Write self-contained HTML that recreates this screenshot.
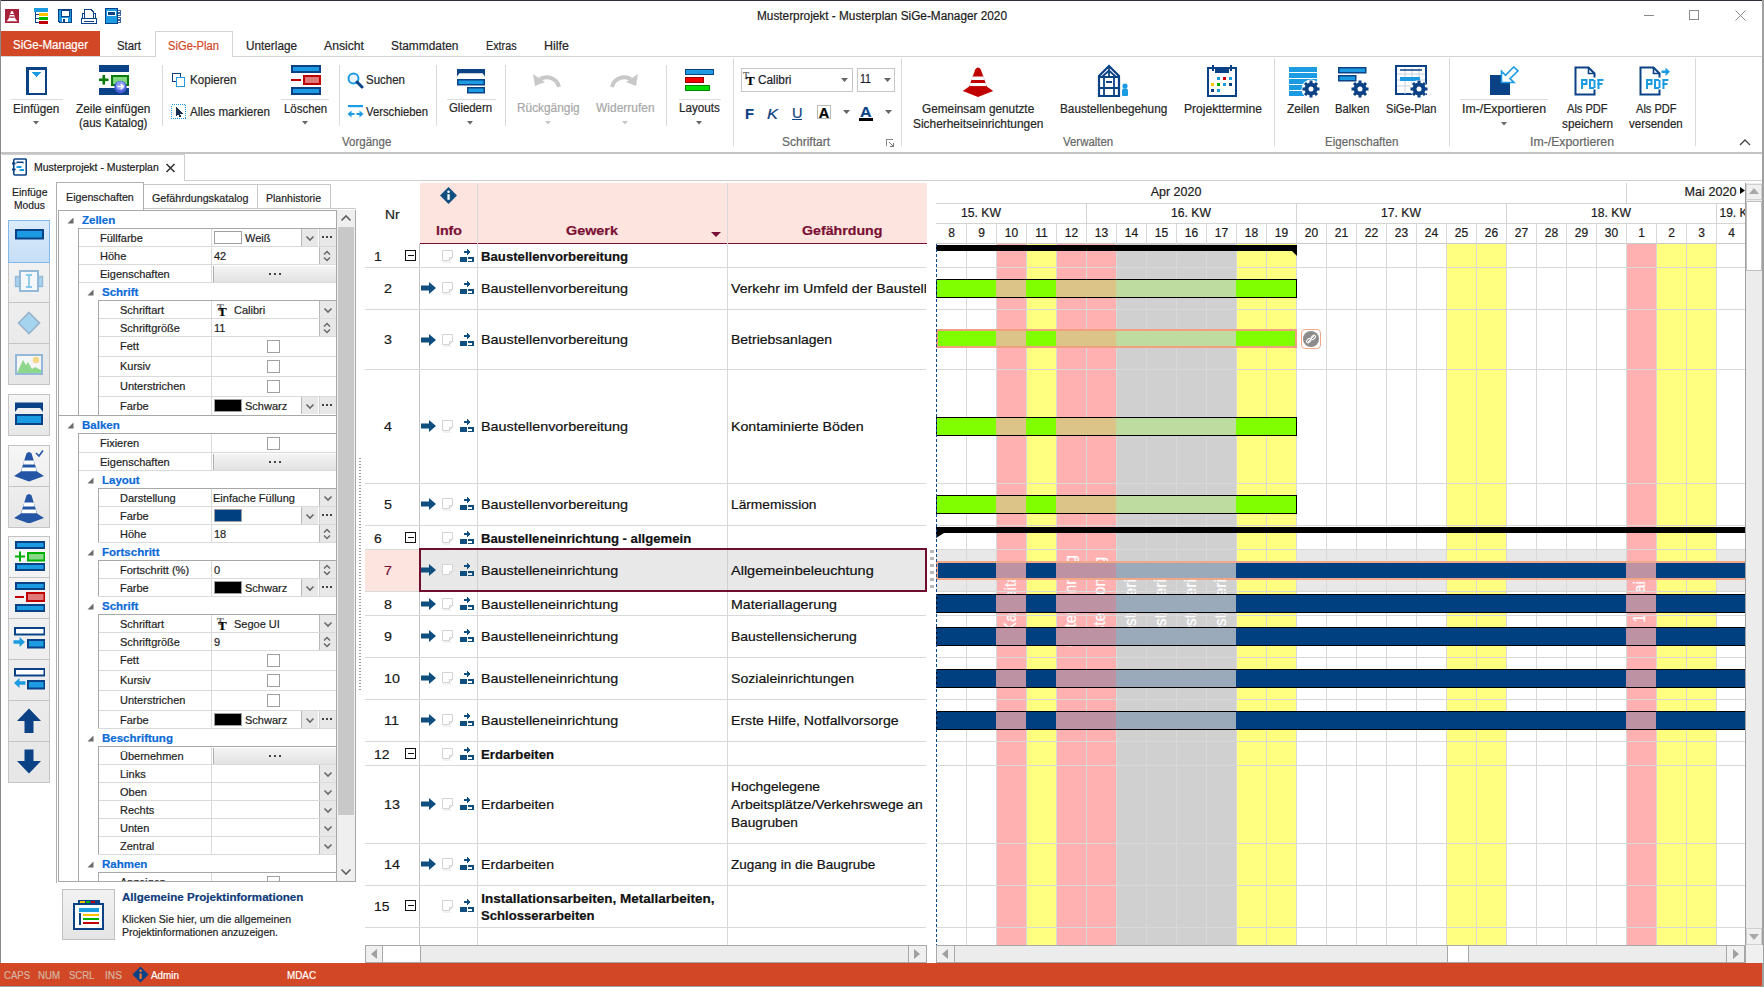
<!DOCTYPE html>
<html><head><meta charset="utf-8"><title>SiGe-Manager</title>
<style>
html,body{margin:0;padding:0;width:1764px;height:987px;overflow:hidden;background:#fff;}
body{position:relative;font-family:"Liberation Sans",sans-serif;}
.t{position:absolute;white-space:nowrap;-webkit-text-stroke:0.2px currentColor;}
.r{position:absolute;box-sizing:border-box;}
</style></head><body>
<div class="r" style="left:0px;top:0px;width:1764px;height:1px;background:#2b2f3a;"></div>
<div class="r" style="left:0px;top:0px;width:1px;height:987px;background:#8a8a8a;"></div>
<div class="r" style="left:1763px;top:0px;width:1px;height:987px;background:#8a8a8a;"></div>
<div class="t" style="left:757.00px;top:10.14px;font-size:12px;line-height:12px;color:#1a1a1a;transform:scaleX(0.9838);transform-origin:0 0;">Musterprojekt - Musterplan SiGe-Manager 2020</div>
<div class="r" style="left:1644px;top:15px;width:10px;height:1px;background:#8a8a8a;"></div>
<div class="r" style="left:1689px;top:10px;width:10px;height:10px;box-shadow:inset 0 0 0 1px #8a8a8a;"></div>
<svg class="r" style="left:1734.5px;top:9.5px" width="11" height="11" viewBox="0 0 11 11"><path d="M0.5 0.5 L10.5 10.5 M10.5 0.5 L0.5 10.5" stroke="#8a8a8a" stroke-width="1"/></svg>
<div class="r" style="left:1px;top:31px;width:99px;height:26px;background:#d24726;"></div>
<div class="t" style="left:12.50px;top:38.64px;font-size:12px;line-height:12px;color:#ffffff;transform:scaleX(0.9611);transform-origin:0 0;">SiGe-Manager</div>
<div class="r" style="left:1px;top:56px;width:1762px;height:1px;background:#d4d4d4;"></div>
<div class="r" style="left:155px;top:31px;width:78px;height:26px;background:#ffffff;border:1px solid #d4d4d4;border-bottom:none;"></div>
<div class="t" style="left:168.00px;top:40.34px;font-size:12px;line-height:12px;color:#d24726;transform:scaleX(0.9325);transform-origin:0 0;">SiGe-Plan</div>
<div class="t" style="left:117.00px;top:40.34px;font-size:12px;line-height:12px;color:#262626;transform:scaleX(0.9470);transform-origin:0 0;">Start</div>
<div class="t" style="left:246.00px;top:40.34px;font-size:12px;line-height:12px;color:#262626;transform:scaleX(0.9802);transform-origin:0 0;">Unterlage</div>
<div class="t" style="left:324.00px;top:40.34px;font-size:12px;line-height:12px;color:#262626;transform:scaleX(1.0165);transform-origin:0 0;">Ansicht</div>
<div class="t" style="left:391.00px;top:40.34px;font-size:12px;line-height:12px;color:#262626;transform:scaleX(0.9921);transform-origin:0 0;">Stammdaten</div>
<div class="t" style="left:486.00px;top:40.34px;font-size:12px;line-height:12px;color:#262626;transform:scaleX(0.8998);transform-origin:0 0;">Extras</div>
<div class="t" style="left:544.00px;top:40.34px;font-size:12px;line-height:12px;color:#262626;transform:scaleX(1.0415);transform-origin:0 0;">Hilfe</div>
<div class="r" style="left:1px;top:152px;width:1762px;height:2px;background:#c4c4c4;"></div>
<div class="r" style="left:733px;top:58px;width:1px;height:88px;background:#dadada;"></div>
<div class="r" style="left:901px;top:58px;width:1px;height:88px;background:#dadada;"></div>
<div class="r" style="left:1274px;top:58px;width:1px;height:88px;background:#dadada;"></div>
<div class="r" style="left:1449px;top:58px;width:1px;height:88px;background:#dadada;"></div>
<div class="r" style="left:1695px;top:58px;width:1px;height:88px;background:#dadada;"></div>
<div class="r" style="left:162px;top:65px;width:1px;height:61px;background:#dadada;"></div>
<div class="r" style="left:339px;top:65px;width:1px;height:61px;background:#dadada;"></div>
<div class="r" style="left:436px;top:65px;width:1px;height:61px;background:#dadada;"></div>
<div class="r" style="left:505px;top:65px;width:1px;height:61px;background:#dadada;"></div>
<div class="r" style="left:666px;top:65px;width:1px;height:61px;background:#dadada;"></div>
<div class="t" style="left:341.70px;top:135.84px;font-size:12px;line-height:12px;color:#666666;transform:scaleX(0.9595);transform-origin:0 0;">Vorgänge</div>
<div class="t" style="left:782.00px;top:136.34px;font-size:12px;line-height:12px;color:#666666;">Schriftart</div>
<div class="t" style="left:1062.50px;top:136.34px;font-size:12px;line-height:12px;color:#666666;transform:scaleX(0.9526);transform-origin:0 0;">Verwalten</div>
<div class="t" style="left:1325.40px;top:136.34px;font-size:12px;line-height:12px;color:#666666;transform:scaleX(0.9651);transform-origin:0 0;">Eigenschaften</div>
<div class="t" style="left:1529.90px;top:136.34px;font-size:12px;line-height:12px;color:#666666;transform:scaleX(1.0240);transform-origin:0 0;">Im-/Exportieren</div>
<svg class="r" style="left:1738px;top:137px" width="14" height="10" viewBox="0 0 14 10"><path d="M2 8 L7 3 L12 8" fill="none" stroke="#444" stroke-width="1.3"/></svg>
<div class="r" style="left:184px;top:180px;width:1579px;height:1px;background:#cfcfcf;"></div>
<div class="r" style="left:2px;top:154px;width:183px;height:27px;background:#ffffff;border:1px solid #cfcfcf;border-bottom:none;border-left:none;"></div>
<div class="t" style="left:33.60px;top:162.49px;font-size:11px;line-height:11px;color:#1a1a1a;transform:scaleX(0.9533);transform-origin:0 0;">Musterprojekt - Musterplan</div>
<svg class="r" style="left:165px;top:163px" width="11" height="10" viewBox="0 0 11 10"><path d="M1.5 1 L9.5 9 M9.5 1 L1.5 9" stroke="#333" stroke-width="1.6"/></svg>
<div class="r" style="left:0px;top:963px;width:1764px;height:24px;background:#d24726;"></div>
<div class="r" style="left:0px;top:986px;width:1764px;height:1px;background:#a0a2a2;"></div>
<div class="t" style="left:4.00px;top:969.99px;font-size:11px;line-height:11px;color:#d2b6a2;transform:scaleX(0.8679);transform-origin:0 0;">CAPS</div>
<div class="t" style="left:38.00px;top:969.99px;font-size:11px;line-height:11px;color:#d2b6a2;transform:scaleX(0.8782);transform-origin:0 0;">NUM</div>
<div class="t" style="left:69.00px;top:969.99px;font-size:11px;line-height:11px;color:#d2b6a2;transform:scaleX(0.8656);transform-origin:0 0;">SCRL</div>
<div class="t" style="left:105.00px;top:969.99px;font-size:11px;line-height:11px;color:#d2b6a2;transform:scaleX(0.9271);transform-origin:0 0;">INS</div>
<div class="t" style="left:151.00px;top:969.99px;font-size:11px;line-height:11px;color:#ffffff;transform:scaleX(0.8981);transform-origin:0 0;">Admin</div>
<div class="t" style="left:287.00px;top:969.99px;font-size:11px;line-height:11px;color:#ffffff;transform:scaleX(0.8954);transform-origin:0 0;">MDAC</div>
<svg class="r" style="left:11px;top:158px" width="16" height="18" viewBox="0 0 16 18"><rect x="2.75" y="1" width="12.5" height="16" rx="1.2" fill="#fff" stroke="#0b4285" stroke-width="1.6"/><rect x="1" y="4.5" width="3.5" height="2" fill="#0b4285"/><rect x="1" y="10.5" width="3.5" height="2" fill="#0b4285"/><path d="M5.5 3.5 H12.5 V6 L11.5 5 H6.5 L5.5 6 Z" fill="#0b4285"/><rect x="5.5" y="8" width="5" height="2" fill="#1d9be2"/><rect x="8.5" y="11" width="4.5" height="2" fill="#1d9be2"/></svg>
<svg class="r" style="left:132px;top:966px" width="17" height="17" viewBox="0 0 17 17"><path d="M8.5 0.5 L16.5 8.5 L8.5 16.5 L0.5 8.5 Z" fill="#0b4285"/><rect x="7.5" y="7.5" width="2.2" height="5.5" fill="#ee7a3a"/><circle cx="8.6" cy="4.8" r="1.3" fill="#ee7a3a"/></svg>
<svg class="r" style="left:5px;top:9px" width="14" height="14" viewBox="0 0 14 14"><rect width="14" height="14" fill="#a8213a"/><path d="M6 2.6 Q7 1.4 8 2.6 L10.6 10.2 H3.4 Z" fill="#fff"/><path d="M5.3 5 H8.7 L9 6 H5 Z M4.6 7.6 H9.4 L9.8 8.8 H4.2 Z" fill="#a8213a"/><path d="M1.5 12.2 L3.6 10 H10.4 L12.5 12.2 Z" fill="#fff"/></svg>
<svg class="r" style="left:34px;top:8px" width="15" height="17" viewBox="0 0 15 17" shape-rendering="crispEdges"><rect x="0" y="0" width="14" height="4" fill="#1d9be2"/><rect x="1" y="4" width="1" height="11" fill="#0b4285"/><rect x="1" y="6" width="4" height="1" fill="#0b4285"/><rect x="1" y="10" width="4" height="1" fill="#0b4285"/><rect x="1" y="14" width="4" height="1" fill="#0b4285"/><rect x="5" y="5" width="9" height="3" fill="#ffc000"/><rect x="5" y="9" width="9" height="3" fill="#00b800"/><rect x="5" y="13" width="9" height="3" fill="#c00000"/></svg>
<svg class="r" style="left:58px;top:9px" width="14" height="14" viewBox="0 0 14 14" shape-rendering="crispEdges"><path d="M0.5 0.5 H13.5 V13.5 H2 L0.5 12 Z" fill="#1d9be2" stroke="#0b4285" stroke-width="1"/><rect x="3" y="1" width="8" height="6" fill="#fff" stroke="#0b4285" stroke-width="1"/><rect x="4" y="9" width="6" height="4" fill="#fff"/><rect x="5" y="10" width="2" height="3" fill="#0b4285"/></svg>
<svg class="r" style="left:81px;top:9px" width="16" height="15" viewBox="0 0 16 15" shape-rendering="crispEdges"><path d="M3.5 14 V4.5 H1.5 V9.5 M12.5 4.5 H14.5 V9.5" fill="none" stroke="#0b4285"/><path d="M3.5 9 V0.5 H10 L12.5 3 V9" fill="#fff" stroke="#0b4285"/><rect x="0.5" y="9.5" width="15" height="5" fill="#fff" stroke="#0b4285"/><rect x="3" y="12" width="10" height="1" fill="#0b4285"/></svg>
<svg class="r" style="left:105px;top:8px" width="16" height="16" viewBox="0 0 16 16" shape-rendering="crispEdges"><rect x="0.5" y="0.5" width="12" height="15" fill="#1d9be2" stroke="#0b4285"/><rect x="12.5" y="2" width="2.5" height="2" fill="#fff" stroke="#0b4285" stroke-width="0.8"/><rect x="12.5" y="5.5" width="2.5" height="2" fill="#fff" stroke="#0b4285" stroke-width="0.8"/><rect x="12.5" y="9" width="2.5" height="2" fill="#fff" stroke="#0b4285" stroke-width="0.8"/><rect x="12.5" y="12.5" width="2.5" height="2" fill="#fff" stroke="#0b4285" stroke-width="0.8"/><rect x="2" y="3" width="9" height="5" fill="#fff"/><rect x="3" y="4" width="7" height="3" fill="#0b4285"/></svg>
<svg class="r" style="left:26px;top:67px" width="21" height="28" viewBox="0 0 21 28" shape-rendering="crispEdges"><rect x="1.25" y="1.25" width="18.5" height="25.5" fill="#fff" stroke="#0b4285" stroke-width="2.5"/><path d="M5.5 5 H15.5 L10.5 10 Z" fill="#1d9be2"/></svg>
<div class="r" style="left:11px;top:99px;width:52px;height:1px;background:#dcdcdc;"></div>
<div class="t" style="left:13.20px;top:102.54px;font-size:12px;line-height:12px;color:#262626;transform:scaleX(0.9753);transform-origin:0 0;">Einfügen</div>
<svg class="r" style="left:33px;top:120.5px" width="6" height="4" viewBox="0 0 6 4"><path d="M0 0 H6 L3 3.5 Z" fill="#666"/></svg>
<svg class="r" style="left:99px;top:65px" width="31" height="31" viewBox="0 0 31 31"><rect x="0" y="0" width="30" height="7" fill="#0b4285"/><rect x="0" y="23" width="30" height="7" fill="#0b4285"/><rect x="0" y="13.5" width="9.5" height="2.6" fill="#0a7a0a"/><rect x="3.5" y="10" width="2.6" height="9.6" fill="#0a7a0a"/><rect x="13" y="11" width="16" height="9" fill="#7fd67f" stroke="#0a7a0a" stroke-width="2"/><circle cx="21.5" cy="22" r="6.2" fill="#4a5ed8"/><circle cx="21.5" cy="20.8" r="4.6" fill="#8a9cf8"/><path d="M18.5 21.5 H24 M21.8 19 L24.3 21.5 L21.8 24" fill="none" stroke="#fff" stroke-width="1.5"/></svg>
<div class="t" style="left:76.00px;top:102.54px;font-size:12px;line-height:12px;color:#262626;transform:scaleX(0.9870);transform-origin:0 0;">Zeile einfügen</div>
<div class="t" style="left:79.30px;top:117.04px;font-size:12px;line-height:12px;color:#262626;transform:scaleX(0.9583);transform-origin:0 0;">(aus Katalog)</div>
<svg class="r" style="left:172px;top:73px" width="14" height="14" viewBox="0 0 14 14" shape-rendering="crispEdges"><rect x="0.5" y="0.5" width="8" height="8" fill="#fff" stroke="#0b4285"/><rect x="4.5" y="4.5" width="8" height="9" fill="#fff" stroke="#1d9be2"/></svg>
<div class="t" style="left:190.00px;top:73.84px;font-size:12px;line-height:12px;color:#262626;transform:scaleX(0.9681);transform-origin:0 0;">Kopieren</div>
<svg class="r" style="left:171px;top:104px" width="16" height="16" viewBox="0 0 16 16" shape-rendering="crispEdges"><rect x="0.5" y="0.5" width="14" height="14" fill="none" stroke="#1d9be2" stroke-dasharray="1 1"/><path d="M5 3 L5 12 L7 10 L9 13.5 L10.5 12.8 L8.7 9.5 L11.5 9.5 Z" fill="#1a3050"/></svg>
<div class="t" style="left:190.00px;top:105.84px;font-size:12px;line-height:12px;color:#262626;transform:scaleX(0.9674);transform-origin:0 0;">Alles markieren</div>
<svg class="r" style="left:291px;top:65px" width="31" height="30" viewBox="0 0 31 30" shape-rendering="crispEdges"><rect x="1" y="1" width="28" height="6" fill="#1d9be2" stroke="#0b4285" stroke-width="2"/><rect x="1" y="23" width="28" height="6" fill="#1d9be2" stroke="#0b4285" stroke-width="2"/><rect x="13" y="11" width="16" height="8" fill="#e07b7b" stroke="#c00000" stroke-width="2"/><rect x="0" y="14" width="10" height="2" fill="#c00000"/></svg>
<div class="r" style="left:281px;top:99px;width:48px;height:1px;background:#dcdcdc;"></div>
<div class="t" style="left:283.50px;top:102.64px;font-size:12px;line-height:12px;color:#262626;transform:scaleX(0.9522);transform-origin:0 0;">Löschen</div>
<svg class="r" style="left:302px;top:120.5px" width="6" height="4" viewBox="0 0 6 4"><path d="M0 0 H6 L3 3.5 Z" fill="#666"/></svg>
<svg class="r" style="left:347px;top:72px" width="17" height="17" viewBox="0 0 17 17"><circle cx="6.5" cy="6.5" r="5" fill="#eaf4fc" stroke="#1d9be2" stroke-width="2"/><path d="M10 10 L15 15" stroke="#0b4285" stroke-width="3" stroke-linecap="round"/></svg>
<div class="t" style="left:366.00px;top:73.84px;font-size:12px;line-height:12px;color:#262626;transform:scaleX(0.9583);transform-origin:0 0;">Suchen</div>
<svg class="r" style="left:347px;top:104px" width="17" height="15" viewBox="0 0 17 15"><rect x="1" y="1" width="15" height="2.2" fill="#1d9be2"/><path d="M0.5 10 L4.5 6.5 V13.5 Z M16.5 10 L12.5 6.5 V13.5 Z" fill="#1d9be2"/><rect x="4" y="9" width="3.5" height="2" fill="#1d9be2"/><rect x="9.5" y="9" width="3.5" height="2" fill="#1d9be2"/></svg>
<div class="t" style="left:366.00px;top:105.84px;font-size:12px;line-height:12px;color:#262626;transform:scaleX(0.9387);transform-origin:0 0;">Verschieben</div>
<svg class="r" style="left:457px;top:69px" width="29" height="25" viewBox="0 0 29 25"><path d="M0 0 H28 V7.5 L25.5 4.2 H2.5 L0 7.5 Z" fill="#0b4285"/><rect x="0.75" y="10.75" width="26.5" height="5" fill="#1d9be2" stroke="#0b4285" stroke-width="1.5"/><rect x="10.75" y="18.75" width="16.5" height="5" fill="#1d9be2" stroke="#0b4285" stroke-width="1.5"/></svg>
<div class="r" style="left:447px;top:99px;width:49px;height:1px;background:#dcdcdc;"></div>
<div class="t" style="left:449.45px;top:102.44px;font-size:12px;line-height:12px;color:#262626;transform:scaleX(0.9503);transform-origin:0 0;">Gliedern</div>
<svg class="r" style="left:467px;top:120.5px" width="6" height="4" viewBox="0 0 6 4"><path d="M0 0 H6 L3 3.5 Z" fill="#666"/></svg>
<svg class="r" style="left:531px;top:72px" width="31" height="16" viewBox="0 0 31 16"><path d="M28 15 C26 6 16 3 9 7" fill="none" stroke="#c8c8c8" stroke-width="4"/><path d="M2 2 L4 14 L14 10 Z" fill="#c8c8c8"/></svg>
<div class="t" style="left:517.00px;top:102.44px;font-size:12px;line-height:12px;color:#a8a8a8;transform:scaleX(0.9878);transform-origin:0 0;">Rückgängig</div>
<svg class="r" style="left:545px;top:120.5px" width="6" height="4" viewBox="0 0 6 4"><path d="M0 0 H6 L3 3.5 Z" fill="#c8c8c8"/></svg>
<svg class="r" style="left:609px;top:72px" width="31" height="16" viewBox="0 0 31 16"><path d="M3 15 C5 6 15 3 22 7" fill="none" stroke="#c8c8c8" stroke-width="4"/><path d="M29 2 L27 14 L17 10 Z" fill="#c8c8c8"/></svg>
<div class="t" style="left:596.00px;top:102.44px;font-size:12px;line-height:12px;color:#a8a8a8;">Widerrufen</div>
<svg class="r" style="left:622px;top:120.5px" width="6" height="4" viewBox="0 0 6 4"><path d="M0 0 H6 L3 3.5 Z" fill="#c8c8c8"/></svg>
<svg class="r" style="left:685px;top:69px" width="29" height="23" viewBox="0 0 29 23" shape-rendering="crispEdges"><rect x="0.5" y="0.5" width="27.5" height="5" fill="#1d9be2" stroke="#0b4285"/><rect x="0.5" y="8.5" width="17.5" height="5" fill="#f00000" stroke="#900"/><rect x="0.5" y="16.5" width="23.5" height="5" fill="#00e000" stroke="#080"/></svg>
<div class="r" style="left:679px;top:99px;width:42px;height:1px;background:#dcdcdc;"></div>
<div class="t" style="left:679.10px;top:102.44px;font-size:12px;line-height:12px;color:#262626;transform:scaleX(0.9708);transform-origin:0 0;">Layouts</div>
<svg class="r" style="left:696px;top:120.5px" width="6" height="4" viewBox="0 0 6 4"><path d="M0 0 H6 L3 3.5 Z" fill="#666"/></svg>
<div class="r" style="left:741px;top:68px;width:112px;height:24px;background:#fff;box-shadow:inset 0 0 0 1px #c6c6c6;"></div>
<div class="r" style="left:857px;top:68px;width:38px;height:24px;background:#fff;box-shadow:inset 0 0 0 1px #c6c6c6;"></div>
<div class="t" style="left:743px;top:71px;font-family:'Liberation Serif',serif;font-size:10px;line-height:10px;color:#555;">T</div>
<div class="t" style="left:746px;top:74px;font-family:'Liberation Serif',serif;font-size:13px;line-height:13px;font-weight:bold;color:#000;">T</div>
<div class="t" style="left:758.00px;top:73.84px;font-size:12px;line-height:12px;color:#1a1a2a;transform:scaleX(0.9851);transform-origin:0 0;">Calibri</div>
<div class="t" style="left:860.00px;top:73.34px;font-size:12px;line-height:12px;color:#1a1a2a;transform:scaleX(0.8831);transform-origin:0 0;">11</div>
<svg class="r" style="left:841px;top:78px" width="8" height="4" viewBox="0 0 8 4"><path d="M0 0 H7 L3.5 4 Z" fill="#666"/></svg>
<svg class="r" style="left:884px;top:78px" width="8" height="4" viewBox="0 0 8 4"><path d="M0 0 H7 L3.5 4 Z" fill="#666"/></svg>
<div class="t" style="left:744.50px;top:105.58px;font-size:15.5px;line-height:15.5px;color:#0b4285;font-weight:bold;transform:scaleX(0.9505);transform-origin:0 0;">F</div>
<div class="t" style="left:766.50px;top:105.58px;font-size:15.5px;line-height:15.5px;color:#0b4285;font-style:italic;transform:scaleX(1.0639);transform-origin:0 0;">K</div>
<div class="t" style="left:791.50px;top:104.80px;font-size:15px;line-height:15px;color:#0b4285;transform:scaleX(0.9693);transform-origin:0 0;">U</div>
<div class="r" style="left:792px;top:119px;width:10px;height:1px;background:#0b4285;"></div>
<div class="r" style="left:817px;top:105px;width:14px;height:14px;background:#fff;box-shadow:inset 0 0 0 1px #bbbbbb;"></div>
<div class="t" style="left:818.80px;top:105.73px;font-size:14.5px;line-height:14.5px;color:#000;font-weight:bold;">A</div>
<svg class="r" style="left:843px;top:110px" width="8" height="4" viewBox="0 0 8 4"><path d="M0 0 H7 L3.5 4 Z" fill="#666"/></svg>
<div class="t" style="left:860.00px;top:104.73px;font-size:14.5px;line-height:14.5px;color:#0b4285;font-weight:bold;transform:scaleX(1.0982);transform-origin:0 0;">A</div>
<div class="r" style="left:859px;top:118px;width:14px;height:2.5px;background:#000;"></div>
<svg class="r" style="left:885px;top:110px" width="8" height="4" viewBox="0 0 8 4"><path d="M0 0 H7 L3.5 4 Z" fill="#666"/></svg>
<svg class="r" style="left:886px;top:139px" width="8" height="8" viewBox="0 0 8 8" shape-rendering="crispEdges"><path d="M0.5 7 V0.5 H7" fill="none" stroke="#888"/><path d="M3 3 L7 7 M7 4 V7 H4" fill="none" stroke="#777"/></svg>
<svg class="r" style="left:962px;top:66px" width="32" height="32" viewBox="0 0 32 32"><path d="M13.2 3.5 Q16 -0.5 18.8 3.5 L25 21 H7 Z" fill="#c00000"/><path d="M10.6 10.5 H21.4 L22.6 14 H9.4 Z M8.4 17 H23.6 L24.7 20.3 H7.3 Z" fill="#fff"/><path d="M0.8 25 L7.5 20.3 H24.5 L31.2 25 L16 31 Z" fill="#c00000"/></svg>
<div class="t" style="left:921.90px;top:103.14px;font-size:12px;line-height:12px;color:#262626;transform:scaleX(0.9837);transform-origin:0 0;">Gemeinsam genutzte</div>
<div class="t" style="left:913.30px;top:118.14px;font-size:12px;line-height:12px;color:#262626;transform:scaleX(0.9923);transform-origin:0 0;">Sicherheitseinrichtungen</div>
<svg class="r" style="left:1097px;top:64px" width="34" height="33" viewBox="0 0 34 33"><path d="M2 32 V12 L12 2 L22 12 V32 Z" fill="none" stroke="#0b4285" stroke-width="2.2"/><path d="M2 13 H22 M2 24 H22 M7 13 V32 M17 13 V32 M12 3 V13 M5 13 L12 6.5 L19 13 M9 18 H15" fill="none" stroke="#0b4285" stroke-width="1.8"/><circle cx="28" cy="22" r="2.6" fill="#1d9be2"/><path d="M25.2 25.5 Q28 23 30.8 25.5 V32 H25.2 Z" fill="#1d9be2"/><rect x="25" y="25" width="6" height="7" rx="2.5" fill="#1d9be2"/></svg>
<div class="t" style="left:1060.40px;top:103.14px;font-size:12px;line-height:12px;color:#262626;transform:scaleX(0.9797);transform-origin:0 0;">Baustellenbegehung</div>
<svg class="r" style="left:1206px;top:64px" width="32" height="33" viewBox="0 0 32 33" shape-rendering="crispEdges"><rect x="2" y="4" width="28" height="28" fill="#fff" stroke="#0b4285" stroke-width="2"/><rect x="9" y="3" width="14" height="6" fill="#0b4285"/><rect x="6" y="1" width="2" height="6" fill="#0b4285"/><rect x="24" y="1" width="2" height="6" fill="#0b4285"/><rect x="11" y="13" width="3" height="3" fill="#1d9be2"/><rect x="17" y="13" width="3" height="3" fill="#d00000"/><rect x="23" y="13" width="3" height="3" fill="#1d9be2"/><rect x="5" y="19" width="3" height="3" fill="#ffc000"/><rect x="11" y="19" width="3" height="3" fill="#00b000"/><rect x="17" y="19" width="3" height="3" fill="#1d9be2"/><rect x="23" y="19" width="3" height="3" fill="#0b4285"/><rect x="5" y="25" width="3" height="3" fill="#0b4285"/><rect x="11" y="25" width="3" height="3" fill="#1d9be2"/></svg>
<div class="t" style="left:1184.00px;top:103.14px;font-size:12px;line-height:12px;color:#262626;transform:scaleX(1.0082);transform-origin:0 0;">Projekttermine</div>
<svg class="r" style="left:1289px;top:67px" width="32" height="32" viewBox="0 0 32 32"><rect x="0" y="0" width="28" height="5" fill="#1d9be2"/><rect x="0" y="6" width="28" height="5" fill="#1d9be2"/><rect x="0" y="12" width="28" height="5" fill="#1d9be2"/><rect x="0" y="18" width="28" height="5" fill="#1d9be2"/><rect x="0" y="24" width="28" height="5" fill="#1d9be2"/><circle cx="22" cy="22" r="9.5" fill="#fff"/><circle cx="22" cy="22" r="6.5" fill="#0b4285"/><rect x="20.5" y="13.5" width="3" height="4" fill="#0b4285" transform="rotate(0 22 22)"/><rect x="20.5" y="13.5" width="3" height="4" fill="#0b4285" transform="rotate(45 22 22)"/><rect x="20.5" y="13.5" width="3" height="4" fill="#0b4285" transform="rotate(90 22 22)"/><rect x="20.5" y="13.5" width="3" height="4" fill="#0b4285" transform="rotate(135 22 22)"/><rect x="20.5" y="13.5" width="3" height="4" fill="#0b4285" transform="rotate(180 22 22)"/><rect x="20.5" y="13.5" width="3" height="4" fill="#0b4285" transform="rotate(225 22 22)"/><rect x="20.5" y="13.5" width="3" height="4" fill="#0b4285" transform="rotate(270 22 22)"/><rect x="20.5" y="13.5" width="3" height="4" fill="#0b4285" transform="rotate(315 22 22)"/><circle cx="22" cy="22" r="2.5" fill="#fff"/></svg>
<div class="t" style="left:1286.90px;top:103.14px;font-size:12px;line-height:12px;color:#262626;transform:scaleX(0.9853);transform-origin:0 0;">Zeilen</div>
<svg class="r" style="left:1338px;top:67px" width="32" height="32" viewBox="0 0 32 32"><rect x="0.75" y="0.75" width="27" height="5" fill="#1d9be2" stroke="#0b4285" stroke-width="1.5"/><rect x="0.75" y="8.75" width="17" height="5" fill="#1d9be2" stroke="#0b4285" stroke-width="1.5"/><circle cx="22" cy="22" r="6.5" fill="#0b4285"/><rect x="20.5" y="13.5" width="3" height="4" fill="#0b4285" transform="rotate(0 22 22)"/><rect x="20.5" y="13.5" width="3" height="4" fill="#0b4285" transform="rotate(45 22 22)"/><rect x="20.5" y="13.5" width="3" height="4" fill="#0b4285" transform="rotate(90 22 22)"/><rect x="20.5" y="13.5" width="3" height="4" fill="#0b4285" transform="rotate(135 22 22)"/><rect x="20.5" y="13.5" width="3" height="4" fill="#0b4285" transform="rotate(180 22 22)"/><rect x="20.5" y="13.5" width="3" height="4" fill="#0b4285" transform="rotate(225 22 22)"/><rect x="20.5" y="13.5" width="3" height="4" fill="#0b4285" transform="rotate(270 22 22)"/><rect x="20.5" y="13.5" width="3" height="4" fill="#0b4285" transform="rotate(315 22 22)"/><circle cx="22" cy="22" r="2.5" fill="#fff"/></svg>
<div class="t" style="left:1335.00px;top:103.14px;font-size:12px;line-height:12px;color:#262626;transform:scaleX(0.9376);transform-origin:0 0;">Balken</div>
<svg class="r" style="left:1395px;top:65px" width="33" height="33" viewBox="0 0 33 33"><rect x="1" y="1" width="30" height="28" fill="#fff" stroke="#0b4285" stroke-width="2"/><path d="M2 9 H30 M2 15 H30 M2 21 H30 M10 3 V29 M17 3 V29 M24 3 V29" stroke="#c8d0e0" stroke-width="1"/><path d="M5 5 H27" stroke="#0b4285" stroke-width="1.5"/><rect x="5" y="12" width="20" height="4" fill="#1d9be2"/><circle cx="24" cy="24" r="9" fill="#fff"/><circle cx="24" cy="24" r="6.5" fill="#0b4285"/><rect x="22.5" y="15.5" width="3" height="4" fill="#0b4285" transform="rotate(0 24 24)"/><rect x="22.5" y="15.5" width="3" height="4" fill="#0b4285" transform="rotate(45 24 24)"/><rect x="22.5" y="15.5" width="3" height="4" fill="#0b4285" transform="rotate(90 24 24)"/><rect x="22.5" y="15.5" width="3" height="4" fill="#0b4285" transform="rotate(135 24 24)"/><rect x="22.5" y="15.5" width="3" height="4" fill="#0b4285" transform="rotate(180 24 24)"/><rect x="22.5" y="15.5" width="3" height="4" fill="#0b4285" transform="rotate(225 24 24)"/><rect x="22.5" y="15.5" width="3" height="4" fill="#0b4285" transform="rotate(270 24 24)"/><rect x="22.5" y="15.5" width="3" height="4" fill="#0b4285" transform="rotate(315 24 24)"/><circle cx="24" cy="24" r="2.5" fill="#fff"/></svg>
<div class="t" style="left:1386.20px;top:103.14px;font-size:12px;line-height:12px;color:#262626;transform:scaleX(0.9215);transform-origin:0 0;">SiGe-Plan</div>
<svg class="r" style="left:1489px;top:66px" width="32" height="30" viewBox="0 0 32 30"><rect x="1" y="9" width="20" height="20" fill="#0b4285"/><path d="M12.5 5.3 V16.5 H25 L21 12.7 L29 4.8 L24.7 1 L16.5 9.3 Z" fill="#fff" stroke="#1d9be2" stroke-width="1.6" stroke-linejoin="miter"/></svg>
<div class="r" style="left:1460px;top:99px;width:88px;height:1px;background:#dcdcdc;"></div>
<div class="t" style="left:1461.80px;top:103.14px;font-size:12px;line-height:12px;color:#262626;transform:scaleX(1.0240);transform-origin:0 0;">Im-/Exportieren</div>
<svg class="r" style="left:1501px;top:121.5px" width="6" height="4" viewBox="0 0 6 4"><path d="M0 0 H6 L3 3.5 Z" fill="#666"/></svg>
<svg class="r" style="left:1574px;top:66px" width="32" height="30" viewBox="0 0 32 30"><path d="M20.5 11.5 V7.5 L14.5 1.5 H1.5 V28.5 H20.5 V23.5" fill="none" stroke="#0b4285" stroke-width="2"/><path d="M14.5 1.5 V7.5 H20.5" fill="none" stroke="#0b4285" stroke-width="1.6"/><rect x="7" y="13" width="2" height="10" fill="#1d9be2"/><rect x="7" y="13" width="6" height="2" fill="#1d9be2"/><rect x="11.5" y="13" width="2" height="6" fill="#1d9be2"/><rect x="7" y="17" width="6" height="2" fill="#1d9be2"/><rect x="15" y="13" width="2" height="10" fill="#1d9be2"/><rect x="15" y="13" width="5" height="2" fill="#1d9be2"/><rect x="15" y="21" width="5" height="2" fill="#1d9be2"/><rect x="19.5" y="14" width="2" height="8" fill="#1d9be2"/><rect x="23.5" y="13" width="2" height="10" fill="#1d9be2"/><rect x="23.5" y="13" width="6" height="2" fill="#1d9be2"/><rect x="23.5" y="17" width="5" height="2" fill="#1d9be2"/></svg>
<div class="t" style="left:1566.70px;top:103.14px;font-size:12px;line-height:12px;color:#262626;transform:scaleX(0.9226);transform-origin:0 0;">Als PDF</div>
<div class="t" style="left:1562.00px;top:118.14px;font-size:12px;line-height:12px;color:#262626;transform:scaleX(0.9802);transform-origin:0 0;">speichern</div>
<svg class="r" style="left:1639px;top:66px" width="32" height="30" viewBox="0 0 32 30"><path d="M20.5 11.5 V7.5 L14.5 1.5 H1.5 V28.5 H20.5 V23.5" fill="none" stroke="#0b4285" stroke-width="2"/><path d="M14.5 1.5 V7.5 H20.5" fill="none" stroke="#0b4285" stroke-width="1.6"/><rect x="22.5" y="4.5" width="4.5" height="2.5" fill="#1d9be2"/><path d="M26.5 1.5 L31 5.75 L26.5 10 Z" fill="#1d9be2"/><rect x="7" y="13" width="2" height="10" fill="#1d9be2"/><rect x="7" y="13" width="6" height="2" fill="#1d9be2"/><rect x="11.5" y="13" width="2" height="6" fill="#1d9be2"/><rect x="7" y="17" width="6" height="2" fill="#1d9be2"/><rect x="15" y="13" width="2" height="10" fill="#1d9be2"/><rect x="15" y="13" width="5" height="2" fill="#1d9be2"/><rect x="15" y="21" width="5" height="2" fill="#1d9be2"/><rect x="19.5" y="14" width="2" height="8" fill="#1d9be2"/><rect x="23.5" y="13" width="2" height="10" fill="#1d9be2"/><rect x="23.5" y="13" width="6" height="2" fill="#1d9be2"/><rect x="23.5" y="17" width="5" height="2" fill="#1d9be2"/></svg>
<div class="t" style="left:1635.70px;top:103.14px;font-size:12px;line-height:12px;color:#262626;transform:scaleX(0.9226);transform-origin:0 0;">Als PDF</div>
<div class="t" style="left:1629.15px;top:118.14px;font-size:12px;line-height:12px;color:#262626;transform:scaleX(0.9583);transform-origin:0 0;">versenden</div>
<div class="t" style="left:11.55px;top:187.49px;font-size:11px;line-height:11px;color:#1e1e1e;transform:scaleX(0.9516);transform-origin:0 0;">Einfüge</div>
<div class="t" style="left:13.60px;top:199.89px;font-size:11px;line-height:11px;color:#1e1e1e;transform:scaleX(0.9329);transform-origin:0 0;">Modus</div>
<div class="r" style="left:8px;top:220px;width:42px;height:165px;background:linear-gradient(#f6f6f6,#e6e6e6);box-shadow:inset 0 0 0 1px #c4c4c4;"></div>
<div class="r" style="left:8px;top:394px;width:42px;height:42px;background:linear-gradient(#f6f6f6,#e6e6e6);box-shadow:inset 0 0 0 1px #c4c4c4;"></div>
<div class="r" style="left:8px;top:445px;width:42px;height:83px;background:linear-gradient(#f6f6f6,#e6e6e6);box-shadow:inset 0 0 0 1px #c4c4c4;"></div>
<div class="r" style="left:8px;top:536px;width:42px;height:247px;background:linear-gradient(#f6f6f6,#e6e6e6);box-shadow:inset 0 0 0 1px #c4c4c4;"></div>
<div class="r" style="left:9px;top:262px;width:40px;height:1px;background:#c4c4c4;"></div>
<div class="r" style="left:9px;top:302px;width:40px;height:1px;background:#c4c4c4;"></div>
<div class="r" style="left:9px;top:343px;width:40px;height:1px;background:#c4c4c4;"></div>
<div class="r" style="left:9px;top:394px;width:40px;height:1px;background:#c4c4c4;"></div>
<div class="r" style="left:9px;top:445px;width:40px;height:1px;background:#c4c4c4;"></div>
<div class="r" style="left:9px;top:486px;width:40px;height:1px;background:#c4c4c4;"></div>
<div class="r" style="left:9px;top:536px;width:40px;height:1px;background:#c4c4c4;"></div>
<div class="r" style="left:9px;top:577px;width:40px;height:1px;background:#c4c4c4;"></div>
<div class="r" style="left:9px;top:618px;width:40px;height:1px;background:#c4c4c4;"></div>
<div class="r" style="left:9px;top:659px;width:40px;height:1px;background:#c4c4c4;"></div>
<div class="r" style="left:9px;top:700px;width:40px;height:1px;background:#c4c4c4;"></div>
<div class="r" style="left:9px;top:741px;width:40px;height:1px;background:#c4c4c4;"></div>
<div class="r" style="left:8px;top:220px;width:42px;height:43px;background:linear-gradient(#dcecfb,#c4ddf6);box-shadow:inset 0 0 0 1px #84b8ea;"></div>
<svg class="r" style="left:13px;top:225px" width="32" height="32" viewBox="0 0 32 32"><rect x="3" y="5" width="27" height="8.5" fill="#1d9be2" stroke="#0b4285" stroke-width="2"/></svg>
<svg class="r" style="left:13px;top:267px" width="32" height="32" viewBox="0 0 32 32"><rect x="7" y="4" width="18" height="20" fill="#f4f8fc" stroke="#94b8d8" stroke-width="2"/><rect x="2.5" y="9.5" width="4" height="10" fill="#a8d4ee" stroke="#94b8d8" stroke-width="1.4"/><rect x="25.5" y="9.5" width="4" height="10" fill="#a8d4ee" stroke="#94b8d8" stroke-width="1.4"/><path d="M13 8 H19 M16 8 V20 M13 20 H19" stroke="#88c8ea" stroke-width="1.8"/></svg>
<svg class="r" style="left:13px;top:307px" width="32" height="32" viewBox="0 0 32 32"><path d="M16 5.5 L26.5 16 L16 26.5 L5.5 16 Z" fill="#a4d4ee" stroke="#98b4cc" stroke-width="1.6"/></svg>
<svg class="r" style="left:13px;top:348px" width="32" height="32" viewBox="0 0 32 32"><rect x="3" y="7" width="26" height="19" fill="#f6f6f6" stroke="#94b8d8" stroke-width="2"/><path d="M4 25 L10 12 L13 17 L15 14 L19 21 L22 19 L28 22 V25 Z" fill="#8ed88e"/><circle cx="23" cy="12" r="3.3" fill="#f4d88a"/></svg>
<svg class="r" style="left:13px;top:399px" width="32" height="32" viewBox="0 0 32 32"><path d="M2 3.5 H30 V13 L27 9 H5 L2 13 Z" fill="#0b4285"/><rect x="3" y="16" width="26" height="9" fill="#1d9be2" stroke="#0b4285" stroke-width="2"/></svg>
<svg class="r" style="left:13px;top:450px" width="32" height="32" viewBox="0 0 32 32"><g transform="translate(0 0.5)"><path d="M13.5 3 Q16 0 18.5 3 L24.5 22 H7.5 Z" fill="#2556a6"/><path d="M11.3 10 H20.7 L21.8 14 H10.2 Z M9.2 17 H22.8 L23.8 21 H8.2 Z" fill="#fff"/><path d="M1 25.5 L8 21 H24 L31 25.5 L16 31 Z" fill="#2556a6"/></g><path d="M23 3 L26 6 L30 0.5" fill="none" stroke="#2556a6" stroke-width="1.6"/></svg>
<svg class="r" style="left:13px;top:491px" width="32" height="32" viewBox="0 0 32 32"><g transform="translate(0 1.5)"><path d="M13.5 3 Q16 0 18.5 3 L24.5 22 H7.5 Z" fill="#2556a6"/><path d="M11.3 10 H20.7 L21.8 14 H10.2 Z M9.2 17 H22.8 L23.8 21 H8.2 Z" fill="#fff"/><path d="M1 25.5 L8 21 H24 L31 25.5 L16 31 Z" fill="#2556a6"/></g></svg>
<svg class="r" style="left:13px;top:541px" width="32" height="32" viewBox="0 0 32 32"><rect x="3" y="1" width="28.5" height="6" fill="#1d9be2" stroke="#0b4285" stroke-width="2"/><rect x="3" y="23" width="28.5" height="6" fill="#1d9be2" stroke="#0b4285" stroke-width="2"/><rect x="15" y="12" width="16.5" height="7.5" fill="#88d888" stroke="#00b000" stroke-width="2"/><path d="M2 15.5 H12 M7 10.5 V20.5" stroke="#00b000" stroke-width="2"/></svg>
<svg class="r" style="left:13px;top:582px" width="32" height="32" viewBox="0 0 32 32"><rect x="3" y="1" width="28.5" height="6" fill="#1d9be2" stroke="#0b4285" stroke-width="2"/><rect x="3" y="23" width="28.5" height="6" fill="#1d9be2" stroke="#0b4285" stroke-width="2"/><rect x="14" y="11" width="17.5" height="8" fill="#e07a7a" stroke="#c00000" stroke-width="2"/><path d="M2 15 H11" stroke="#c00000" stroke-width="2"/></svg>
<svg class="r" style="left:13px;top:623px" width="32" height="32" viewBox="0 0 32 32"><rect x="2" y="5" width="29.5" height="6.5" fill="#fff" stroke="#0b4285" stroke-width="2"/><rect x="15" y="17" width="16.5" height="7.5" fill="#1d9be2" stroke="#0b4285" stroke-width="2"/><path d="M0.5 19 H7" stroke="#1d9be2" stroke-width="3.5"/><path d="M6.5 14 L12 19 L6.5 24 Z" fill="#1d9be2"/></svg>
<svg class="r" style="left:13px;top:664px" width="32" height="32" viewBox="0 0 32 32"><rect x="2" y="5" width="29.5" height="6.5" fill="#fff" stroke="#0b4285" stroke-width="2"/><rect x="15" y="17" width="16.5" height="7.5" fill="#1d9be2" stroke="#0b4285" stroke-width="2"/><path d="M6 19 H12.5" stroke="#1d9be2" stroke-width="3.5"/><path d="M6.5 14 L1 19 L6.5 24 Z" fill="#1d9be2"/></svg>
<svg class="r" style="left:13px;top:705px" width="32" height="32" viewBox="0 0 32 32"><path d="M16 3.5 L28 16 H20.5 V28 H11.5 V16 H4 Z" fill="#0b4285"/></svg>
<svg class="r" style="left:13px;top:746px" width="32" height="32" viewBox="0 0 32 32"><path d="M16 27.5 L28 15 H20.5 V3.5 H11.5 V15 H4 Z" fill="#0b4285"/></svg>
<div class="r" style="left:143px;top:208px;width:213px;height:1px;background:#c8c8c8;"></div>
<div class="r" style="left:143px;top:184px;width:115px;height:25px;background:#ffffff;box-shadow:inset 0 0 0 1px #c8c8c8;"></div>
<div class="r" style="left:257px;top:184px;width:74px;height:25px;background:#ffffff;box-shadow:inset 0 0 0 1px #c8c8c8;"></div>
<div class="r" style="left:56px;top:182px;width:88px;height:28px;background:#ffffff;border:1px solid #b0b0b0;border-bottom:none;"></div>
<div class="t" style="left:65.50px;top:191.57px;font-size:11.5px;line-height:11.5px;color:#1e1e1e;transform:scaleX(0.9303);transform-origin:0 0;">Eigenschaften</div>
<div class="t" style="left:151.50px;top:192.57px;font-size:11.5px;line-height:11.5px;color:#1e1e1e;transform:scaleX(0.9317);transform-origin:0 0;">Gefährdungskatalog</div>
<div class="t" style="left:266.00px;top:192.57px;font-size:11.5px;line-height:11.5px;color:#1e1e1e;transform:scaleX(0.9154);transform-origin:0 0;">Planhistorie</div>
<div class="r" style="left:56px;top:209px;width:1px;height:674px;background:#b0b0b0;"></div>
<div class="r" style="left:58px;top:210px;width:298px;height:672px;background:#ffffff;box-shadow:inset 0 0 0 1px #a8a8a8;"></div>
<div class="r" style="left:337px;top:210px;width:18px;height:671px;background:#efefef;"></div>
<div class="r" style="left:338px;top:227px;width:16px;height:588px;background:#c8c8c8;"></div>
<svg class="r" style="left:340px;top:214px" width="12" height="8" viewBox="0 0 12 8"><path d="M1.5 6.5 L6 2 L10.5 6.5" fill="none" stroke="#606060" stroke-width="1.6"/></svg>
<svg class="r" style="left:340px;top:868px" width="12" height="8" viewBox="0 0 12 8"><path d="M1.5 1.5 L6 6 L10.5 1.5" fill="none" stroke="#606060" stroke-width="1.6"/></svg>
<div class="r" style="left:336px;top:210px;width:1px;height:671px;background:#a8a8a8;"></div>
<div class="r" style="left:58px;top:210px;width:278px;height:671px;overflow:hidden;">
<svg class="r" style="left:9px;top:7px" width="7" height="7" viewBox="0 0 7 7"><path d="M6.5 0.5 V6.5 H0.5 Z" fill="#6a6a6a"/></svg>
<div class="t" style="left:24.00px;top:4.57px;font-size:11.5px;line-height:11.5px;color:#0a6ad6;font-weight:bold;">Zellen</div>
<div class="r" style="left:20px;top:18px;width:258px;height:1px;background:#a8a8a8;"></div>
<div class="r" style="left:20px;top:18px;width:1px;height:18px;background:#a8a8a8;"></div>
<div class="r" style="left:20px;top:36px;width:258px;height:1px;background:#dadada;"></div>
<div class="r" style="left:153px;top:19px;width:1px;height:17px;background:#dadada;"></div>
<div class="t" style="left:42.00px;top:22.69px;font-size:11px;line-height:11px;color:#1e1e1e;">Füllfarbe</div>
<div class="r" style="left:156px;top:21px;width:28px;height:13px;background:#ffffff;box-shadow:inset 0 0 0 1px #a0a0a0;"></div>
<div class="t" style="left:187.00px;top:22.69px;font-size:11px;line-height:11px;color:#1e1e1e;">Weiß</div>
<div class="r" style="left:243px;top:19px;width:17px;height:17px;background:#e8e8e8;border-left:1px solid #b8b8b8;"></div>
<svg class="r" style="left:247px;top:25px" width="10" height="7" viewBox="0 0 10 7"><path d="M1.5 1.5 L5 5 L8.5 1.5" fill="none" stroke="#6a6a6a" stroke-width="1.6"/></svg>
<div class="r" style="left:261px;top:19px;width:17px;height:17px;background:#e8e8e8;border-left:1px solid #d0d0d0;"></div>
<svg class="r" style="left:263px;top:25px" width="13" height="4" viewBox="0 0 13 4"><rect x="1" y="1" width="2" height="2" fill="#444"/><rect x="5" y="1" width="2" height="2" fill="#444"/><rect x="9" y="1" width="2" height="2" fill="#444"/></svg>
<div class="r" style="left:20px;top:36px;width:1px;height:18px;background:#a8a8a8;"></div>
<div class="r" style="left:20px;top:54px;width:258px;height:1px;background:#dadada;"></div>
<div class="r" style="left:153px;top:37px;width:1px;height:17px;background:#dadada;"></div>
<div class="t" style="left:42.00px;top:40.69px;font-size:11px;line-height:11px;color:#1e1e1e;">Höhe</div>
<div class="t" style="left:156.00px;top:40.69px;font-size:11px;line-height:11px;color:#1e1e1e;">42</div>
<div class="r" style="left:261px;top:37px;width:17px;height:17px;background:#e8e8e8;border-left:1px solid #b8b8b8;"></div>
<svg class="r" style="left:264px;top:39px" width="10" height="14" viewBox="0 0 10 14"><path d="M2 5.5 L5 2.5 L8 5.5 M2 8.5 L5 11.5 L8 8.5" fill="none" stroke="#6a6a6a" stroke-width="1.5"/></svg>
<div class="r" style="left:20px;top:54px;width:1px;height:18px;background:#a8a8a8;"></div>
<div class="r" style="left:20px;top:72px;width:258px;height:1px;background:#dadada;"></div>
<div class="r" style="left:153px;top:55px;width:1px;height:17px;background:#dadada;"></div>
<div class="t" style="left:42.00px;top:58.69px;font-size:11px;line-height:11px;color:#1e1e1e;">Eigenschaften</div>
<div class="r" style="left:155px;top:56px;width:123px;height:16px;background:linear-gradient(#f4f4f4,#e2e2e2);border-left:1px solid #b0b0b0;"></div>
<svg class="r" style="left:210px;top:62px" width="14" height="4" viewBox="0 0 14 4"><rect x="1" y="1" width="2" height="2" fill="#444"/><rect x="6" y="1" width="2" height="2" fill="#444"/><rect x="11" y="1" width="2" height="2" fill="#444"/></svg>
<div class="r" style="left:20px;top:72px;width:1px;height:18px;background:#a8a8a8;"></div>
<svg class="r" style="left:29px;top:79px" width="7" height="7" viewBox="0 0 7 7"><path d="M6.5 0.5 V6.5 H0.5 Z" fill="#6a6a6a"/></svg>
<div class="t" style="left:44.00px;top:76.57px;font-size:11.5px;line-height:11.5px;color:#0a6ad6;font-weight:bold;">Schrift</div>
<div class="r" style="left:40px;top:90px;width:238px;height:1px;background:#a8a8a8;"></div>
<div class="r" style="left:20px;top:90px;width:1px;height:18px;background:#a8a8a8;"></div>
<div class="r" style="left:40px;top:90px;width:1px;height:18px;background:#a8a8a8;"></div>
<div class="r" style="left:40px;top:108px;width:238px;height:1px;background:#dadada;"></div>
<div class="r" style="left:153px;top:91px;width:1px;height:17px;background:#dadada;"></div>
<div class="t" style="left:62.00px;top:94.69px;font-size:11px;line-height:11px;color:#1e1e1e;">Schriftart</div>
<div class="t" style="left:159px;top:93px;font-family:'Liberation Serif',serif;font-size:10px;line-height:10px;font-weight:bold;color:#777;">T</div>
<div class="t" style="left:160px;top:95px;font-family:'Liberation Serif',serif;font-size:13px;line-height:13px;font-weight:bold;color:#000;">T</div>
<div class="t" style="left:176.00px;top:94.69px;font-size:11px;line-height:11px;color:#1e1e1e;">Calibri</div>
<div class="r" style="left:261px;top:91px;width:17px;height:17px;background:#e8e8e8;border-left:1px solid #b8b8b8;"></div>
<svg class="r" style="left:265px;top:97px" width="10" height="7" viewBox="0 0 10 7"><path d="M1.5 1.5 L5 5 L8.5 1.5" fill="none" stroke="#6a6a6a" stroke-width="1.6"/></svg>
<div class="r" style="left:20px;top:108px;width:1px;height:18px;background:#a8a8a8;"></div>
<div class="r" style="left:40px;top:108px;width:1px;height:18px;background:#a8a8a8;"></div>
<div class="r" style="left:40px;top:126px;width:238px;height:1px;background:#dadada;"></div>
<div class="r" style="left:153px;top:109px;width:1px;height:17px;background:#dadada;"></div>
<div class="t" style="left:62.00px;top:112.69px;font-size:11px;line-height:11px;color:#1e1e1e;">Schriftgröße</div>
<div class="t" style="left:156.00px;top:112.69px;font-size:11px;line-height:11px;color:#1e1e1e;">11</div>
<div class="r" style="left:261px;top:109px;width:17px;height:17px;background:#e8e8e8;border-left:1px solid #b8b8b8;"></div>
<svg class="r" style="left:264px;top:111px" width="10" height="14" viewBox="0 0 10 14"><path d="M2 5.5 L5 2.5 L8 5.5 M2 8.5 L5 11.5 L8 8.5" fill="none" stroke="#6a6a6a" stroke-width="1.5"/></svg>
<div class="r" style="left:20px;top:126px;width:1px;height:20px;background:#a8a8a8;"></div>
<div class="r" style="left:40px;top:126px;width:1px;height:20px;background:#a8a8a8;"></div>
<div class="r" style="left:40px;top:146px;width:238px;height:1px;background:#dadada;"></div>
<div class="r" style="left:153px;top:127px;width:1px;height:19px;background:#dadada;"></div>
<div class="t" style="left:62.00px;top:130.69px;font-size:11px;line-height:11px;color:#1e1e1e;">Fett</div>
<div class="r" style="left:209px;top:130px;width:13px;height:13px;background:#ffffff;box-shadow:inset 0 0 0 1px #a0a0a0;"></div>
<div class="r" style="left:20px;top:146px;width:1px;height:20px;background:#a8a8a8;"></div>
<div class="r" style="left:40px;top:146px;width:1px;height:20px;background:#a8a8a8;"></div>
<div class="r" style="left:40px;top:166px;width:238px;height:1px;background:#dadada;"></div>
<div class="r" style="left:153px;top:147px;width:1px;height:19px;background:#dadada;"></div>
<div class="t" style="left:62.00px;top:150.69px;font-size:11px;line-height:11px;color:#1e1e1e;">Kursiv</div>
<div class="r" style="left:209px;top:150px;width:13px;height:13px;background:#ffffff;box-shadow:inset 0 0 0 1px #a0a0a0;"></div>
<div class="r" style="left:20px;top:166px;width:1px;height:20px;background:#a8a8a8;"></div>
<div class="r" style="left:40px;top:166px;width:1px;height:20px;background:#a8a8a8;"></div>
<div class="r" style="left:40px;top:186px;width:238px;height:1px;background:#dadada;"></div>
<div class="r" style="left:153px;top:167px;width:1px;height:19px;background:#dadada;"></div>
<div class="t" style="left:62.00px;top:170.69px;font-size:11px;line-height:11px;color:#1e1e1e;">Unterstrichen</div>
<div class="r" style="left:209px;top:170px;width:13px;height:13px;background:#ffffff;box-shadow:inset 0 0 0 1px #a0a0a0;"></div>
<div class="r" style="left:20px;top:186px;width:1px;height:19px;background:#a8a8a8;"></div>
<div class="r" style="left:40px;top:186px;width:1px;height:19px;background:#a8a8a8;"></div>
<div class="r" style="left:40px;top:205px;width:238px;height:1px;background:#dadada;"></div>
<div class="r" style="left:153px;top:187px;width:1px;height:18px;background:#dadada;"></div>
<div class="t" style="left:62.00px;top:190.69px;font-size:11px;line-height:11px;color:#1e1e1e;">Farbe</div>
<div class="r" style="left:156px;top:189px;width:28px;height:13px;background:#000000;box-shadow:inset 0 0 0 1px #a0a0a0;"></div>
<div class="t" style="left:187.00px;top:190.69px;font-size:11px;line-height:11px;color:#1e1e1e;">Schwarz</div>
<div class="r" style="left:243px;top:187px;width:17px;height:17px;background:#e8e8e8;border-left:1px solid #b8b8b8;"></div>
<svg class="r" style="left:247px;top:193px" width="10" height="7" viewBox="0 0 10 7"><path d="M1.5 1.5 L5 5 L8.5 1.5" fill="none" stroke="#6a6a6a" stroke-width="1.6"/></svg>
<div class="r" style="left:261px;top:187px;width:17px;height:17px;background:#e8e8e8;border-left:1px solid #d0d0d0;"></div>
<svg class="r" style="left:263px;top:193px" width="13" height="4" viewBox="0 0 13 4"><rect x="1" y="1" width="2" height="2" fill="#444"/><rect x="5" y="1" width="2" height="2" fill="#444"/><rect x="9" y="1" width="2" height="2" fill="#444"/></svg>
<div class="r" style="left:0px;top:205px;width:278px;height:1px;background:#a8a8a8;"></div>
<svg class="r" style="left:9px;top:212px" width="7" height="7" viewBox="0 0 7 7"><path d="M6.5 0.5 V6.5 H0.5 Z" fill="#6a6a6a"/></svg>
<div class="t" style="left:24.00px;top:209.57px;font-size:11.5px;line-height:11.5px;color:#0a6ad6;font-weight:bold;">Balken</div>
<div class="r" style="left:20px;top:223px;width:258px;height:1px;background:#a8a8a8;"></div>
<div class="r" style="left:20px;top:223px;width:1px;height:19px;background:#a8a8a8;"></div>
<div class="r" style="left:20px;top:242px;width:258px;height:1px;background:#dadada;"></div>
<div class="r" style="left:153px;top:224px;width:1px;height:18px;background:#dadada;"></div>
<div class="t" style="left:42.00px;top:227.69px;font-size:11px;line-height:11px;color:#1e1e1e;">Fixieren</div>
<div class="r" style="left:209px;top:227px;width:13px;height:13px;background:#ffffff;box-shadow:inset 0 0 0 1px #a0a0a0;"></div>
<div class="r" style="left:20px;top:242px;width:1px;height:18px;background:#a8a8a8;"></div>
<div class="r" style="left:20px;top:260px;width:258px;height:1px;background:#dadada;"></div>
<div class="r" style="left:153px;top:243px;width:1px;height:17px;background:#dadada;"></div>
<div class="t" style="left:42.00px;top:246.69px;font-size:11px;line-height:11px;color:#1e1e1e;">Eigenschaften</div>
<div class="r" style="left:155px;top:244px;width:123px;height:16px;background:linear-gradient(#f4f4f4,#e2e2e2);border-left:1px solid #b0b0b0;"></div>
<svg class="r" style="left:210px;top:250px" width="14" height="4" viewBox="0 0 14 4"><rect x="1" y="1" width="2" height="2" fill="#444"/><rect x="6" y="1" width="2" height="2" fill="#444"/><rect x="11" y="1" width="2" height="2" fill="#444"/></svg>
<div class="r" style="left:20px;top:260px;width:1px;height:18px;background:#a8a8a8;"></div>
<svg class="r" style="left:29px;top:267px" width="7" height="7" viewBox="0 0 7 7"><path d="M6.5 0.5 V6.5 H0.5 Z" fill="#6a6a6a"/></svg>
<div class="t" style="left:44.00px;top:264.57px;font-size:11.5px;line-height:11.5px;color:#0a6ad6;font-weight:bold;">Layout</div>
<div class="r" style="left:40px;top:278px;width:238px;height:1px;background:#a8a8a8;"></div>
<div class="r" style="left:20px;top:278px;width:1px;height:18px;background:#a8a8a8;"></div>
<div class="r" style="left:40px;top:278px;width:1px;height:18px;background:#a8a8a8;"></div>
<div class="r" style="left:40px;top:296px;width:238px;height:1px;background:#dadada;"></div>
<div class="r" style="left:153px;top:279px;width:1px;height:17px;background:#dadada;"></div>
<div class="t" style="left:62.00px;top:282.69px;font-size:11px;line-height:11px;color:#1e1e1e;">Darstellung</div>
<div class="t" style="left:155.00px;top:282.69px;font-size:11px;line-height:11px;color:#1e1e1e;">Einfache Füllung</div>
<div class="r" style="left:261px;top:279px;width:17px;height:17px;background:#e8e8e8;border-left:1px solid #b8b8b8;"></div>
<svg class="r" style="left:265px;top:285px" width="10" height="7" viewBox="0 0 10 7"><path d="M1.5 1.5 L5 5 L8.5 1.5" fill="none" stroke="#6a6a6a" stroke-width="1.6"/></svg>
<div class="r" style="left:20px;top:296px;width:1px;height:18px;background:#a8a8a8;"></div>
<div class="r" style="left:40px;top:296px;width:1px;height:18px;background:#a8a8a8;"></div>
<div class="r" style="left:40px;top:314px;width:238px;height:1px;background:#dadada;"></div>
<div class="r" style="left:153px;top:297px;width:1px;height:17px;background:#dadada;"></div>
<div class="t" style="left:62.00px;top:300.69px;font-size:11px;line-height:11px;color:#1e1e1e;">Farbe</div>
<div class="r" style="left:156px;top:299px;width:28px;height:13px;background:#003f80;box-shadow:inset 0 0 0 1px #a0a0a0;"></div>
<div class="r" style="left:243px;top:297px;width:17px;height:17px;background:#e8e8e8;border-left:1px solid #b8b8b8;"></div>
<svg class="r" style="left:247px;top:303px" width="10" height="7" viewBox="0 0 10 7"><path d="M1.5 1.5 L5 5 L8.5 1.5" fill="none" stroke="#6a6a6a" stroke-width="1.6"/></svg>
<div class="r" style="left:261px;top:297px;width:17px;height:17px;background:#e8e8e8;border-left:1px solid #d0d0d0;"></div>
<svg class="r" style="left:263px;top:303px" width="13" height="4" viewBox="0 0 13 4"><rect x="1" y="1" width="2" height="2" fill="#444"/><rect x="5" y="1" width="2" height="2" fill="#444"/><rect x="9" y="1" width="2" height="2" fill="#444"/></svg>
<div class="r" style="left:20px;top:314px;width:1px;height:18px;background:#a8a8a8;"></div>
<div class="r" style="left:40px;top:314px;width:1px;height:18px;background:#a8a8a8;"></div>
<div class="r" style="left:40px;top:332px;width:238px;height:1px;background:#dadada;"></div>
<div class="r" style="left:153px;top:315px;width:1px;height:17px;background:#dadada;"></div>
<div class="t" style="left:62.00px;top:318.69px;font-size:11px;line-height:11px;color:#1e1e1e;">Höhe</div>
<div class="t" style="left:156.00px;top:318.69px;font-size:11px;line-height:11px;color:#1e1e1e;">18</div>
<div class="r" style="left:261px;top:315px;width:17px;height:17px;background:#e8e8e8;border-left:1px solid #b8b8b8;"></div>
<svg class="r" style="left:264px;top:317px" width="10" height="14" viewBox="0 0 10 14"><path d="M2 5.5 L5 2.5 L8 5.5 M2 8.5 L5 11.5 L8 8.5" fill="none" stroke="#6a6a6a" stroke-width="1.5"/></svg>
<div class="r" style="left:20px;top:332px;width:1px;height:18px;background:#a8a8a8;"></div>
<svg class="r" style="left:29px;top:339px" width="7" height="7" viewBox="0 0 7 7"><path d="M6.5 0.5 V6.5 H0.5 Z" fill="#6a6a6a"/></svg>
<div class="t" style="left:44.00px;top:336.57px;font-size:11.5px;line-height:11.5px;color:#0a6ad6;font-weight:bold;">Fortschritt</div>
<div class="r" style="left:40px;top:350px;width:238px;height:1px;background:#a8a8a8;"></div>
<div class="r" style="left:20px;top:350px;width:1px;height:18px;background:#a8a8a8;"></div>
<div class="r" style="left:40px;top:350px;width:1px;height:18px;background:#a8a8a8;"></div>
<div class="r" style="left:40px;top:368px;width:238px;height:1px;background:#dadada;"></div>
<div class="r" style="left:153px;top:351px;width:1px;height:17px;background:#dadada;"></div>
<div class="t" style="left:62.00px;top:354.69px;font-size:11px;line-height:11px;color:#1e1e1e;">Fortschritt (%)</div>
<div class="t" style="left:156.00px;top:354.69px;font-size:11px;line-height:11px;color:#1e1e1e;">0</div>
<div class="r" style="left:261px;top:351px;width:17px;height:17px;background:#e8e8e8;border-left:1px solid #b8b8b8;"></div>
<svg class="r" style="left:264px;top:353px" width="10" height="14" viewBox="0 0 10 14"><path d="M2 5.5 L5 2.5 L8 5.5 M2 8.5 L5 11.5 L8 8.5" fill="none" stroke="#6a6a6a" stroke-width="1.5"/></svg>
<div class="r" style="left:20px;top:368px;width:1px;height:18px;background:#a8a8a8;"></div>
<div class="r" style="left:40px;top:368px;width:1px;height:18px;background:#a8a8a8;"></div>
<div class="r" style="left:40px;top:386px;width:238px;height:1px;background:#dadada;"></div>
<div class="r" style="left:153px;top:369px;width:1px;height:17px;background:#dadada;"></div>
<div class="t" style="left:62.00px;top:372.69px;font-size:11px;line-height:11px;color:#1e1e1e;">Farbe</div>
<div class="r" style="left:156px;top:371px;width:28px;height:13px;background:#000000;box-shadow:inset 0 0 0 1px #a0a0a0;"></div>
<div class="t" style="left:187.00px;top:372.69px;font-size:11px;line-height:11px;color:#1e1e1e;">Schwarz</div>
<div class="r" style="left:243px;top:369px;width:17px;height:17px;background:#e8e8e8;border-left:1px solid #b8b8b8;"></div>
<svg class="r" style="left:247px;top:375px" width="10" height="7" viewBox="0 0 10 7"><path d="M1.5 1.5 L5 5 L8.5 1.5" fill="none" stroke="#6a6a6a" stroke-width="1.6"/></svg>
<div class="r" style="left:261px;top:369px;width:17px;height:17px;background:#e8e8e8;border-left:1px solid #d0d0d0;"></div>
<svg class="r" style="left:263px;top:375px" width="13" height="4" viewBox="0 0 13 4"><rect x="1" y="1" width="2" height="2" fill="#444"/><rect x="5" y="1" width="2" height="2" fill="#444"/><rect x="9" y="1" width="2" height="2" fill="#444"/></svg>
<div class="r" style="left:20px;top:386px;width:1px;height:18px;background:#a8a8a8;"></div>
<svg class="r" style="left:29px;top:393px" width="7" height="7" viewBox="0 0 7 7"><path d="M6.5 0.5 V6.5 H0.5 Z" fill="#6a6a6a"/></svg>
<div class="t" style="left:44.00px;top:390.57px;font-size:11.5px;line-height:11.5px;color:#0a6ad6;font-weight:bold;">Schrift</div>
<div class="r" style="left:40px;top:404px;width:238px;height:1px;background:#a8a8a8;"></div>
<div class="r" style="left:20px;top:404px;width:1px;height:18px;background:#a8a8a8;"></div>
<div class="r" style="left:40px;top:404px;width:1px;height:18px;background:#a8a8a8;"></div>
<div class="r" style="left:40px;top:422px;width:238px;height:1px;background:#dadada;"></div>
<div class="r" style="left:153px;top:405px;width:1px;height:17px;background:#dadada;"></div>
<div class="t" style="left:62.00px;top:408.69px;font-size:11px;line-height:11px;color:#1e1e1e;">Schriftart</div>
<div class="t" style="left:159px;top:407px;font-family:'Liberation Serif',serif;font-size:10px;line-height:10px;font-weight:bold;color:#777;">T</div>
<div class="t" style="left:160px;top:409px;font-family:'Liberation Serif',serif;font-size:13px;line-height:13px;font-weight:bold;color:#000;">T</div>
<div class="t" style="left:176.00px;top:408.69px;font-size:11px;line-height:11px;color:#1e1e1e;">Segoe UI</div>
<div class="r" style="left:261px;top:405px;width:17px;height:17px;background:#e8e8e8;border-left:1px solid #b8b8b8;"></div>
<svg class="r" style="left:265px;top:411px" width="10" height="7" viewBox="0 0 10 7"><path d="M1.5 1.5 L5 5 L8.5 1.5" fill="none" stroke="#6a6a6a" stroke-width="1.6"/></svg>
<div class="r" style="left:20px;top:422px;width:1px;height:18px;background:#a8a8a8;"></div>
<div class="r" style="left:40px;top:422px;width:1px;height:18px;background:#a8a8a8;"></div>
<div class="r" style="left:40px;top:440px;width:238px;height:1px;background:#dadada;"></div>
<div class="r" style="left:153px;top:423px;width:1px;height:17px;background:#dadada;"></div>
<div class="t" style="left:62.00px;top:426.69px;font-size:11px;line-height:11px;color:#1e1e1e;">Schriftgröße</div>
<div class="t" style="left:156.00px;top:426.69px;font-size:11px;line-height:11px;color:#1e1e1e;">9</div>
<div class="r" style="left:261px;top:423px;width:17px;height:17px;background:#e8e8e8;border-left:1px solid #b8b8b8;"></div>
<svg class="r" style="left:264px;top:425px" width="10" height="14" viewBox="0 0 10 14"><path d="M2 5.5 L5 2.5 L8 5.5 M2 8.5 L5 11.5 L8 8.5" fill="none" stroke="#6a6a6a" stroke-width="1.5"/></svg>
<div class="r" style="left:20px;top:440px;width:1px;height:20px;background:#a8a8a8;"></div>
<div class="r" style="left:40px;top:440px;width:1px;height:20px;background:#a8a8a8;"></div>
<div class="r" style="left:40px;top:460px;width:238px;height:1px;background:#dadada;"></div>
<div class="r" style="left:153px;top:441px;width:1px;height:19px;background:#dadada;"></div>
<div class="t" style="left:62.00px;top:444.69px;font-size:11px;line-height:11px;color:#1e1e1e;">Fett</div>
<div class="r" style="left:209px;top:444px;width:13px;height:13px;background:#ffffff;box-shadow:inset 0 0 0 1px #a0a0a0;"></div>
<div class="r" style="left:20px;top:460px;width:1px;height:20px;background:#a8a8a8;"></div>
<div class="r" style="left:40px;top:460px;width:1px;height:20px;background:#a8a8a8;"></div>
<div class="r" style="left:40px;top:480px;width:238px;height:1px;background:#dadada;"></div>
<div class="r" style="left:153px;top:461px;width:1px;height:19px;background:#dadada;"></div>
<div class="t" style="left:62.00px;top:464.69px;font-size:11px;line-height:11px;color:#1e1e1e;">Kursiv</div>
<div class="r" style="left:209px;top:464px;width:13px;height:13px;background:#ffffff;box-shadow:inset 0 0 0 1px #a0a0a0;"></div>
<div class="r" style="left:20px;top:480px;width:1px;height:20px;background:#a8a8a8;"></div>
<div class="r" style="left:40px;top:480px;width:1px;height:20px;background:#a8a8a8;"></div>
<div class="r" style="left:40px;top:500px;width:238px;height:1px;background:#dadada;"></div>
<div class="r" style="left:153px;top:481px;width:1px;height:19px;background:#dadada;"></div>
<div class="t" style="left:62.00px;top:484.69px;font-size:11px;line-height:11px;color:#1e1e1e;">Unterstrichen</div>
<div class="r" style="left:209px;top:484px;width:13px;height:13px;background:#ffffff;box-shadow:inset 0 0 0 1px #a0a0a0;"></div>
<div class="r" style="left:20px;top:500px;width:1px;height:18px;background:#a8a8a8;"></div>
<div class="r" style="left:40px;top:500px;width:1px;height:18px;background:#a8a8a8;"></div>
<div class="r" style="left:40px;top:518px;width:238px;height:1px;background:#dadada;"></div>
<div class="r" style="left:153px;top:501px;width:1px;height:17px;background:#dadada;"></div>
<div class="t" style="left:62.00px;top:504.69px;font-size:11px;line-height:11px;color:#1e1e1e;">Farbe</div>
<div class="r" style="left:156px;top:503px;width:28px;height:13px;background:#000000;box-shadow:inset 0 0 0 1px #a0a0a0;"></div>
<div class="t" style="left:187.00px;top:504.69px;font-size:11px;line-height:11px;color:#1e1e1e;">Schwarz</div>
<div class="r" style="left:243px;top:501px;width:17px;height:17px;background:#e8e8e8;border-left:1px solid #b8b8b8;"></div>
<svg class="r" style="left:247px;top:507px" width="10" height="7" viewBox="0 0 10 7"><path d="M1.5 1.5 L5 5 L8.5 1.5" fill="none" stroke="#6a6a6a" stroke-width="1.6"/></svg>
<div class="r" style="left:261px;top:501px;width:17px;height:17px;background:#e8e8e8;border-left:1px solid #d0d0d0;"></div>
<svg class="r" style="left:263px;top:507px" width="13" height="4" viewBox="0 0 13 4"><rect x="1" y="1" width="2" height="2" fill="#444"/><rect x="5" y="1" width="2" height="2" fill="#444"/><rect x="9" y="1" width="2" height="2" fill="#444"/></svg>
<div class="r" style="left:20px;top:518px;width:1px;height:18px;background:#a8a8a8;"></div>
<svg class="r" style="left:29px;top:525px" width="7" height="7" viewBox="0 0 7 7"><path d="M6.5 0.5 V6.5 H0.5 Z" fill="#6a6a6a"/></svg>
<div class="t" style="left:44.00px;top:522.57px;font-size:11.5px;line-height:11.5px;color:#0a6ad6;font-weight:bold;">Beschriftung</div>
<div class="r" style="left:40px;top:536px;width:238px;height:1px;background:#a8a8a8;"></div>
<div class="r" style="left:20px;top:536px;width:1px;height:18px;background:#a8a8a8;"></div>
<div class="r" style="left:40px;top:536px;width:1px;height:18px;background:#a8a8a8;"></div>
<div class="r" style="left:40px;top:554px;width:238px;height:1px;background:#dadada;"></div>
<div class="r" style="left:153px;top:537px;width:1px;height:17px;background:#dadada;"></div>
<div class="t" style="left:62.00px;top:540.69px;font-size:11px;line-height:11px;color:#1e1e1e;">Übernehmen</div>
<div class="r" style="left:155px;top:538px;width:123px;height:16px;background:linear-gradient(#f4f4f4,#e2e2e2);border-left:1px solid #b0b0b0;"></div>
<svg class="r" style="left:210px;top:544px" width="14" height="4" viewBox="0 0 14 4"><rect x="1" y="1" width="2" height="2" fill="#444"/><rect x="6" y="1" width="2" height="2" fill="#444"/><rect x="11" y="1" width="2" height="2" fill="#444"/></svg>
<div class="r" style="left:20px;top:554px;width:1px;height:18px;background:#a8a8a8;"></div>
<div class="r" style="left:40px;top:554px;width:1px;height:18px;background:#a8a8a8;"></div>
<div class="r" style="left:40px;top:572px;width:238px;height:1px;background:#dadada;"></div>
<div class="r" style="left:153px;top:555px;width:1px;height:17px;background:#dadada;"></div>
<div class="t" style="left:62.00px;top:558.69px;font-size:11px;line-height:11px;color:#1e1e1e;">Links</div>
<div class="r" style="left:261px;top:555px;width:17px;height:17px;background:#e8e8e8;border-left:1px solid #b8b8b8;"></div>
<svg class="r" style="left:265px;top:561px" width="10" height="7" viewBox="0 0 10 7"><path d="M1.5 1.5 L5 5 L8.5 1.5" fill="none" stroke="#6a6a6a" stroke-width="1.6"/></svg>
<div class="r" style="left:20px;top:572px;width:1px;height:18px;background:#a8a8a8;"></div>
<div class="r" style="left:40px;top:572px;width:1px;height:18px;background:#a8a8a8;"></div>
<div class="r" style="left:40px;top:590px;width:238px;height:1px;background:#dadada;"></div>
<div class="r" style="left:153px;top:573px;width:1px;height:17px;background:#dadada;"></div>
<div class="t" style="left:62.00px;top:576.69px;font-size:11px;line-height:11px;color:#1e1e1e;">Oben</div>
<div class="r" style="left:261px;top:573px;width:17px;height:17px;background:#e8e8e8;border-left:1px solid #b8b8b8;"></div>
<svg class="r" style="left:265px;top:579px" width="10" height="7" viewBox="0 0 10 7"><path d="M1.5 1.5 L5 5 L8.5 1.5" fill="none" stroke="#6a6a6a" stroke-width="1.6"/></svg>
<div class="r" style="left:20px;top:590px;width:1px;height:18px;background:#a8a8a8;"></div>
<div class="r" style="left:40px;top:590px;width:1px;height:18px;background:#a8a8a8;"></div>
<div class="r" style="left:40px;top:608px;width:238px;height:1px;background:#dadada;"></div>
<div class="r" style="left:153px;top:591px;width:1px;height:17px;background:#dadada;"></div>
<div class="t" style="left:62.00px;top:594.69px;font-size:11px;line-height:11px;color:#1e1e1e;">Rechts</div>
<div class="r" style="left:261px;top:591px;width:17px;height:17px;background:#e8e8e8;border-left:1px solid #b8b8b8;"></div>
<svg class="r" style="left:265px;top:597px" width="10" height="7" viewBox="0 0 10 7"><path d="M1.5 1.5 L5 5 L8.5 1.5" fill="none" stroke="#6a6a6a" stroke-width="1.6"/></svg>
<div class="r" style="left:20px;top:608px;width:1px;height:18px;background:#a8a8a8;"></div>
<div class="r" style="left:40px;top:608px;width:1px;height:18px;background:#a8a8a8;"></div>
<div class="r" style="left:40px;top:626px;width:238px;height:1px;background:#dadada;"></div>
<div class="r" style="left:153px;top:609px;width:1px;height:17px;background:#dadada;"></div>
<div class="t" style="left:62.00px;top:612.69px;font-size:11px;line-height:11px;color:#1e1e1e;">Unten</div>
<div class="r" style="left:261px;top:609px;width:17px;height:17px;background:#e8e8e8;border-left:1px solid #b8b8b8;"></div>
<svg class="r" style="left:265px;top:615px" width="10" height="7" viewBox="0 0 10 7"><path d="M1.5 1.5 L5 5 L8.5 1.5" fill="none" stroke="#6a6a6a" stroke-width="1.6"/></svg>
<div class="r" style="left:20px;top:626px;width:1px;height:18px;background:#a8a8a8;"></div>
<div class="r" style="left:40px;top:626px;width:1px;height:18px;background:#a8a8a8;"></div>
<div class="r" style="left:40px;top:644px;width:238px;height:1px;background:#dadada;"></div>
<div class="r" style="left:153px;top:627px;width:1px;height:17px;background:#dadada;"></div>
<div class="t" style="left:62.00px;top:630.69px;font-size:11px;line-height:11px;color:#1e1e1e;">Zentral</div>
<div class="r" style="left:261px;top:627px;width:17px;height:17px;background:#e8e8e8;border-left:1px solid #b8b8b8;"></div>
<svg class="r" style="left:265px;top:633px" width="10" height="7" viewBox="0 0 10 7"><path d="M1.5 1.5 L5 5 L8.5 1.5" fill="none" stroke="#6a6a6a" stroke-width="1.6"/></svg>
<div class="r" style="left:20px;top:644px;width:1px;height:18px;background:#a8a8a8;"></div>
<svg class="r" style="left:29px;top:651px" width="7" height="7" viewBox="0 0 7 7"><path d="M6.5 0.5 V6.5 H0.5 Z" fill="#6a6a6a"/></svg>
<div class="t" style="left:44.00px;top:648.57px;font-size:11.5px;line-height:11.5px;color:#0a6ad6;font-weight:bold;">Rahmen</div>
<div class="r" style="left:40px;top:662px;width:238px;height:1px;background:#a8a8a8;"></div>
<div class="r" style="left:20px;top:662px;width:1px;height:18px;background:#a8a8a8;"></div>
<div class="r" style="left:40px;top:662px;width:1px;height:18px;background:#a8a8a8;"></div>
<div class="r" style="left:40px;top:680px;width:238px;height:1px;background:#dadada;"></div>
<div class="r" style="left:153px;top:663px;width:1px;height:17px;background:#dadada;"></div>
<div class="t" style="left:62.00px;top:666.69px;font-size:11px;line-height:11px;color:#1e1e1e;">Anzeigen</div>
<div class="r" style="left:209px;top:666px;width:13px;height:13px;background:#ffffff;box-shadow:inset 0 0 0 1px #a0a0a0;"></div>
</div>
<div class="r" style="left:62px;top:889px;width:53px;height:51px;background:linear-gradient(#f2f2f2,#e4e4e4);box-shadow:inset 0 0 0 1px #c0c0c0;"></div>
<svg class="r" style="left:72px;top:898px" width="33" height="33" viewBox="0 0 33 33" shape-rendering="crispEdges"><rect x="6" y="2" width="22" height="4" fill="#0b4285"/><rect x="8" y="3" width="5" height="2" fill="#ffc000"/><rect x="14" y="3" width="4" height="2" fill="#00b000"/><rect x="19" y="3" width="4" height="2" fill="#c00000"/><rect x="2" y="6" width="29" height="25" fill="#fff" stroke="#0b4285" stroke-width="2"/><rect x="7" y="10" width="20" height="4" fill="#1d9be2"/><rect x="7" y="15" width="2" height="12" fill="#0b4285"/><rect x="11" y="16" width="16" height="2" fill="#ffc000"/><rect x="11" y="20" width="16" height="2" fill="#00b000"/><rect x="11" y="24" width="16" height="2" fill="#c00000"/></svg>
<div class="t" style="left:122.00px;top:891.67px;font-size:11.5px;line-height:11.5px;color:#0d3a7a;font-weight:bold;transform:scaleX(1.0061);transform-origin:0 0;">Allgemeine Projektinformationen</div>
<div class="t" style="left:122.00px;top:913.59px;font-size:11px;line-height:11px;color:#1e1e1e;transform:scaleX(0.9564);transform-origin:0 0;">Klicken Sie hier, um die allgemeinen</div>
<div class="t" style="left:122.00px;top:926.59px;font-size:11px;line-height:11px;color:#1e1e1e;transform:scaleX(0.9556);transform-origin:0 0;">Projektinformationen anzuzeigen.</div>
<div class="r" style="left:359px;top:458px;width:2px;height:232px;background:repeating-linear-gradient(#9a9a9a 0 1px,transparent 1px 3px);"></div>
<div class="r" style="left:356px;top:180px;width:1408px;height:1px;background:#cfcfcf;"></div>
<div class="r" style="left:420px;top:183px;width:507px;height:60px;background:#fde4de;"></div>
<div class="r" style="left:420px;top:243px;width:507px;height:1px;background:#7a0f35;"></div>
<div class="t" style="left:385.30px;top:207.57px;font-size:13.5px;line-height:13.5px;color:#1a1a1a;transform:scaleX(1.0249);transform-origin:0 0;">Nr</div>
<svg class="r" style="left:439.5px;top:186.5px" width="17" height="17" viewBox="0 0 17 17"><path d="M8.5 0.3 L16.7 8.5 L8.5 16.7 L0.3 8.5 Z" fill="#0f4f80" stroke="#0f4f80" stroke-width="0.6" stroke-linejoin="round"/><rect x="7.4" y="7.2" width="2.3" height="5.6" fill="#fff"/><circle cx="8.55" cy="4.8" r="1.3" fill="#fff"/></svg>
<div class="t" style="left:435.50px;top:224.37px;font-size:13.5px;line-height:13.5px;color:#7a0f35;font-weight:bold;transform:scaleX(1.0510);transform-origin:0 0;">Info</div>
<div class="t" style="left:565.75px;top:224.47px;font-size:13.5px;line-height:13.5px;color:#7a0f35;font-weight:bold;transform:scaleX(1.0640);transform-origin:0 0;">Gewerk</div>
<svg class="r" style="left:711px;top:232px" width="10" height="5" viewBox="0 0 10 5"><path d="M0 0 H10 L5 5 Z" fill="#7a0f35"/></svg>
<div class="t" style="left:802.00px;top:224.47px;font-size:13.5px;line-height:13.5px;color:#7a0f35;font-weight:bold;transform:scaleX(1.0510);transform-origin:0 0;">Gefährdung</div>
<div class="r" style="left:419px;top:244px;width:1px;height:701px;background:#c4c4c4;"></div>
<div class="r" style="left:477px;top:183px;width:1px;height:762px;background:#d9d9d9;"></div>
<div class="r" style="left:727px;top:183px;width:1px;height:762px;background:#d9d9d9;"></div>
<div class="r" style="left:365px;top:267px;width:561px;height:1px;background:#d9d9d9;"></div>
<div class="t" style="left:374.00px;top:249.57px;font-size:13.5px;line-height:13.5px;color:#1a1a1a;transform:scaleX(1.0300);transform-origin:0 0;">1</div>
<svg class="r" style="left:405px;top:250px" width="12" height="12" viewBox="0 0 12 12" shape-rendering="crispEdges"><rect x="0.6" y="0.6" width="10" height="10" fill="#fff" stroke="#111" stroke-width="1.2"/><rect x="2.5" y="5" width="6.5" height="1.3" fill="#111"/></svg>
<svg class="r" style="left:441px;top:249px" width="14" height="14" viewBox="0 0 14 14"><path d="M1.5 1.5 H11.5 V8.5 L8.5 11.5 H1.5 Z" fill="#fff" stroke="#d4d4d4" stroke-width="1"/><path d="M8.5 11.5 V8.5 H11.5" fill="none" stroke="#d4d4d4"/><path d="M2 13 H10" stroke="#e4e4e4" stroke-width="1"/></svg>
<svg class="r" style="left:459px;top:248px" width="16" height="16" viewBox="0 0 16 16" shape-rendering="crispEdges"><path d="M5 3 H8 V0.5 L11.5 4 L8 7.5 V5 H5 Z" fill="#0f4f80"/><rect x="1" y="9" width="7" height="5" fill="#0f4f80"/><path d="M9 9 H15 V14 H9 V12.5 H13 V10.5 H9 Z" fill="#0f4f80"/></svg>
<div class="t" style="left:481.30px;top:249.57px;font-size:13.5px;line-height:13.5px;color:#111;font-weight:bold;transform:scaleX(0.9756);transform-origin:0 0;">Baustellenvorbereitung</div>
<div class="r" style="left:365px;top:309px;width:561px;height:1px;background:#d9d9d9;"></div>
<div class="t" style="left:383.50px;top:281.57px;font-size:13.5px;line-height:13.5px;color:#1a1a1a;transform:scaleX(1.0600);transform-origin:0 0;">2</div>
<svg class="r" style="left:421px;top:282px" width="16" height="12" viewBox="0 0 16 12"><path d="M0 3.5 H8 V0 L15 6 L8 12 V8.5 H0 Z" fill="#0f4f80"/></svg>
<svg class="r" style="left:441px;top:281px" width="14" height="14" viewBox="0 0 14 14"><path d="M1.5 1.5 H11.5 V8.5 L8.5 11.5 H1.5 Z" fill="#fff" stroke="#d4d4d4" stroke-width="1"/><path d="M8.5 11.5 V8.5 H11.5" fill="none" stroke="#d4d4d4"/><path d="M2 13 H10" stroke="#e4e4e4" stroke-width="1"/></svg>
<svg class="r" style="left:459px;top:280px" width="16" height="16" viewBox="0 0 16 16" shape-rendering="crispEdges"><path d="M5 3 H8 V0.5 L11.5 4 L8 7.5 V5 H5 Z" fill="#0f4f80"/><rect x="1" y="9" width="7" height="5" fill="#0f4f80"/><path d="M9 9 H15 V14 H9 V12.5 H13 V10.5 H9 Z" fill="#0f4f80"/></svg>
<div class="t" style="left:481.30px;top:281.57px;font-size:13.5px;line-height:13.5px;color:#111;transform:scaleX(1.0653);transform-origin:0 0;">Baustellenvorbereitung</div>
<div class="r" style="left:727px;top:268px;width:199px;height:41px;overflow:hidden;">
<div class="t" style="left:4.10px;top:13.57px;font-size:13.5px;line-height:13.5px;color:#111;transform:scaleX(1.0528);transform-origin:0 0;">Verkehr im Umfeld der Baustelle</div>
</div>
<div class="r" style="left:365px;top:369px;width:561px;height:1px;background:#d9d9d9;"></div>
<div class="t" style="left:383.50px;top:332.57px;font-size:13.5px;line-height:13.5px;color:#1a1a1a;transform:scaleX(1.0600);transform-origin:0 0;">3</div>
<svg class="r" style="left:421px;top:334px" width="16" height="12" viewBox="0 0 16 12"><path d="M0 3.5 H8 V0 L15 6 L8 12 V8.5 H0 Z" fill="#0f4f80"/></svg>
<svg class="r" style="left:441px;top:333px" width="14" height="14" viewBox="0 0 14 14"><path d="M1.5 1.5 H11.5 V8.5 L8.5 11.5 H1.5 Z" fill="#fff" stroke="#d4d4d4" stroke-width="1"/><path d="M8.5 11.5 V8.5 H11.5" fill="none" stroke="#d4d4d4"/><path d="M2 13 H10" stroke="#e4e4e4" stroke-width="1"/></svg>
<svg class="r" style="left:459px;top:332px" width="16" height="16" viewBox="0 0 16 16" shape-rendering="crispEdges"><path d="M5 3 H8 V0.5 L11.5 4 L8 7.5 V5 H5 Z" fill="#0f4f80"/><rect x="1" y="9" width="7" height="5" fill="#0f4f80"/><path d="M9 9 H15 V14 H9 V12.5 H13 V10.5 H9 Z" fill="#0f4f80"/></svg>
<div class="t" style="left:481.30px;top:332.57px;font-size:13.5px;line-height:13.5px;color:#111;transform:scaleX(1.0653);transform-origin:0 0;">Baustellenvorbereitung</div>
<div class="r" style="left:727px;top:310px;width:199px;height:59px;overflow:hidden;">
<div class="t" style="left:4.10px;top:22.57px;font-size:13.5px;line-height:13.5px;color:#111;transform:scaleX(1.0362);transform-origin:0 0;">Betriebsanlagen</div>
</div>
<div class="r" style="left:365px;top:483px;width:561px;height:1px;background:#d9d9d9;"></div>
<div class="t" style="left:383.50px;top:419.57px;font-size:13.5px;line-height:13.5px;color:#1a1a1a;transform:scaleX(1.0600);transform-origin:0 0;">4</div>
<svg class="r" style="left:421px;top:420px" width="16" height="12" viewBox="0 0 16 12"><path d="M0 3.5 H8 V0 L15 6 L8 12 V8.5 H0 Z" fill="#0f4f80"/></svg>
<svg class="r" style="left:441px;top:419px" width="14" height="14" viewBox="0 0 14 14"><path d="M1.5 1.5 H11.5 V8.5 L8.5 11.5 H1.5 Z" fill="#fff" stroke="#d4d4d4" stroke-width="1"/><path d="M8.5 11.5 V8.5 H11.5" fill="none" stroke="#d4d4d4"/><path d="M2 13 H10" stroke="#e4e4e4" stroke-width="1"/></svg>
<svg class="r" style="left:459px;top:418px" width="16" height="16" viewBox="0 0 16 16" shape-rendering="crispEdges"><path d="M5 3 H8 V0.5 L11.5 4 L8 7.5 V5 H5 Z" fill="#0f4f80"/><rect x="1" y="9" width="7" height="5" fill="#0f4f80"/><path d="M9 9 H15 V14 H9 V12.5 H13 V10.5 H9 Z" fill="#0f4f80"/></svg>
<div class="t" style="left:481.30px;top:419.57px;font-size:13.5px;line-height:13.5px;color:#111;transform:scaleX(1.0653);transform-origin:0 0;">Baustellenvorbereitung</div>
<div class="r" style="left:727px;top:370px;width:199px;height:113px;overflow:hidden;">
<div class="t" style="left:4.10px;top:49.57px;font-size:13.5px;line-height:13.5px;color:#111;transform:scaleX(1.0517);transform-origin:0 0;">Kontaminierte Böden</div>
</div>
<div class="r" style="left:365px;top:525px;width:561px;height:1px;background:#d9d9d9;"></div>
<div class="t" style="left:383.50px;top:497.57px;font-size:13.5px;line-height:13.5px;color:#1a1a1a;transform:scaleX(1.0600);transform-origin:0 0;">5</div>
<svg class="r" style="left:421px;top:498px" width="16" height="12" viewBox="0 0 16 12"><path d="M0 3.5 H8 V0 L15 6 L8 12 V8.5 H0 Z" fill="#0f4f80"/></svg>
<svg class="r" style="left:441px;top:497px" width="14" height="14" viewBox="0 0 14 14"><path d="M1.5 1.5 H11.5 V8.5 L8.5 11.5 H1.5 Z" fill="#fff" stroke="#d4d4d4" stroke-width="1"/><path d="M8.5 11.5 V8.5 H11.5" fill="none" stroke="#d4d4d4"/><path d="M2 13 H10" stroke="#e4e4e4" stroke-width="1"/></svg>
<svg class="r" style="left:459px;top:496px" width="16" height="16" viewBox="0 0 16 16" shape-rendering="crispEdges"><path d="M5 3 H8 V0.5 L11.5 4 L8 7.5 V5 H5 Z" fill="#0f4f80"/><rect x="1" y="9" width="7" height="5" fill="#0f4f80"/><path d="M9 9 H15 V14 H9 V12.5 H13 V10.5 H9 Z" fill="#0f4f80"/></svg>
<div class="t" style="left:481.30px;top:497.57px;font-size:13.5px;line-height:13.5px;color:#111;transform:scaleX(1.0653);transform-origin:0 0;">Baustellenvorbereitung</div>
<div class="r" style="left:727px;top:484px;width:199px;height:41px;overflow:hidden;">
<div class="t" style="left:4.10px;top:13.57px;font-size:13.5px;line-height:13.5px;color:#111;transform:scaleX(1.0176);transform-origin:0 0;">Lärmemission</div>
</div>
<div class="r" style="left:365px;top:549px;width:561px;height:1px;background:#d9d9d9;"></div>
<div class="t" style="left:374.00px;top:531.57px;font-size:13.5px;line-height:13.5px;color:#1a1a1a;transform:scaleX(1.0300);transform-origin:0 0;">6</div>
<svg class="r" style="left:405px;top:532px" width="12" height="12" viewBox="0 0 12 12" shape-rendering="crispEdges"><rect x="0.6" y="0.6" width="10" height="10" fill="#fff" stroke="#111" stroke-width="1.2"/><rect x="2.5" y="5" width="6.5" height="1.3" fill="#111"/></svg>
<svg class="r" style="left:441px;top:531px" width="14" height="14" viewBox="0 0 14 14"><path d="M1.5 1.5 H11.5 V8.5 L8.5 11.5 H1.5 Z" fill="#fff" stroke="#d4d4d4" stroke-width="1"/><path d="M8.5 11.5 V8.5 H11.5" fill="none" stroke="#d4d4d4"/><path d="M2 13 H10" stroke="#e4e4e4" stroke-width="1"/></svg>
<svg class="r" style="left:459px;top:530px" width="16" height="16" viewBox="0 0 16 16" shape-rendering="crispEdges"><path d="M5 3 H8 V0.5 L11.5 4 L8 7.5 V5 H5 Z" fill="#0f4f80"/><rect x="1" y="9" width="7" height="5" fill="#0f4f80"/><path d="M9 9 H15 V14 H9 V12.5 H13 V10.5 H9 Z" fill="#0f4f80"/></svg>
<div class="t" style="left:481.30px;top:531.57px;font-size:13.5px;line-height:13.5px;color:#111;font-weight:bold;transform:scaleX(0.9730);transform-origin:0 0;">Baustelleneinrichtung - allgemein</div>
<div class="r" style="left:365px;top:591px;width:561px;height:1px;background:#d9d9d9;"></div>
<div class="r" style="left:365px;top:550px;width:54px;height:41px;background:#fde4de;"></div>
<div class="r" style="left:420px;top:550px;width:506px;height:41px;background:#e8e8e8;"></div>
<div class="r" style="left:477px;top:550px;width:1px;height:41px;background:#d0d0d0;"></div>
<div class="r" style="left:727px;top:550px;width:1px;height:41px;background:#d0d0d0;"></div>
<div class="t" style="left:383.50px;top:563.57px;font-size:13.5px;line-height:13.5px;color:#7a0f35;transform:scaleX(1.0600);transform-origin:0 0;">7</div>
<svg class="r" style="left:421px;top:564px" width="16" height="12" viewBox="0 0 16 12"><path d="M0 3.5 H8 V0 L15 6 L8 12 V8.5 H0 Z" fill="#0f4f80"/></svg>
<svg class="r" style="left:441px;top:563px" width="14" height="14" viewBox="0 0 14 14"><path d="M1.5 1.5 H11.5 V8.5 L8.5 11.5 H1.5 Z" fill="#fff" stroke="#d4d4d4" stroke-width="1"/><path d="M8.5 11.5 V8.5 H11.5" fill="none" stroke="#d4d4d4"/><path d="M2 13 H10" stroke="#e4e4e4" stroke-width="1"/></svg>
<svg class="r" style="left:459px;top:562px" width="16" height="16" viewBox="0 0 16 16" shape-rendering="crispEdges"><path d="M5 3 H8 V0.5 L11.5 4 L8 7.5 V5 H5 Z" fill="#0f4f80"/><rect x="1" y="9" width="7" height="5" fill="#0f4f80"/><path d="M9 9 H15 V14 H9 V12.5 H13 V10.5 H9 Z" fill="#0f4f80"/></svg>
<div class="t" style="left:481.30px;top:563.57px;font-size:13.5px;line-height:13.5px;color:#111;transform:scaleX(1.0636);transform-origin:0 0;">Baustelleneinrichtung</div>
<div class="r" style="left:727px;top:550px;width:199px;height:41px;overflow:hidden;">
<div class="t" style="left:4.10px;top:13.57px;font-size:13.5px;line-height:13.5px;color:#111;transform:scaleX(1.0742);transform-origin:0 0;">Allgemeinbeleuchtung</div>
</div>
<div class="r" style="left:365px;top:615px;width:561px;height:1px;background:#d9d9d9;"></div>
<div class="t" style="left:383.50px;top:597.57px;font-size:13.5px;line-height:13.5px;color:#1a1a1a;transform:scaleX(1.0600);transform-origin:0 0;">8</div>
<svg class="r" style="left:421px;top:598px" width="16" height="12" viewBox="0 0 16 12"><path d="M0 3.5 H8 V0 L15 6 L8 12 V8.5 H0 Z" fill="#0f4f80"/></svg>
<svg class="r" style="left:441px;top:597px" width="14" height="14" viewBox="0 0 14 14"><path d="M1.5 1.5 H11.5 V8.5 L8.5 11.5 H1.5 Z" fill="#fff" stroke="#d4d4d4" stroke-width="1"/><path d="M8.5 11.5 V8.5 H11.5" fill="none" stroke="#d4d4d4"/><path d="M2 13 H10" stroke="#e4e4e4" stroke-width="1"/></svg>
<svg class="r" style="left:459px;top:596px" width="16" height="16" viewBox="0 0 16 16" shape-rendering="crispEdges"><path d="M5 3 H8 V0.5 L11.5 4 L8 7.5 V5 H5 Z" fill="#0f4f80"/><rect x="1" y="9" width="7" height="5" fill="#0f4f80"/><path d="M9 9 H15 V14 H9 V12.5 H13 V10.5 H9 Z" fill="#0f4f80"/></svg>
<div class="t" style="left:481.30px;top:597.57px;font-size:13.5px;line-height:13.5px;color:#111;transform:scaleX(1.0636);transform-origin:0 0;">Baustelleneinrichtung</div>
<div class="r" style="left:727px;top:592px;width:199px;height:23px;overflow:hidden;">
<div class="t" style="left:4.10px;top:5.57px;font-size:13.5px;line-height:13.5px;color:#111;transform:scaleX(1.0541);transform-origin:0 0;">Materiallagerung</div>
</div>
<div class="r" style="left:365px;top:657px;width:561px;height:1px;background:#d9d9d9;"></div>
<div class="t" style="left:383.50px;top:629.57px;font-size:13.5px;line-height:13.5px;color:#1a1a1a;transform:scaleX(1.0600);transform-origin:0 0;">9</div>
<svg class="r" style="left:421px;top:630px" width="16" height="12" viewBox="0 0 16 12"><path d="M0 3.5 H8 V0 L15 6 L8 12 V8.5 H0 Z" fill="#0f4f80"/></svg>
<svg class="r" style="left:441px;top:629px" width="14" height="14" viewBox="0 0 14 14"><path d="M1.5 1.5 H11.5 V8.5 L8.5 11.5 H1.5 Z" fill="#fff" stroke="#d4d4d4" stroke-width="1"/><path d="M8.5 11.5 V8.5 H11.5" fill="none" stroke="#d4d4d4"/><path d="M2 13 H10" stroke="#e4e4e4" stroke-width="1"/></svg>
<svg class="r" style="left:459px;top:628px" width="16" height="16" viewBox="0 0 16 16" shape-rendering="crispEdges"><path d="M5 3 H8 V0.5 L11.5 4 L8 7.5 V5 H5 Z" fill="#0f4f80"/><rect x="1" y="9" width="7" height="5" fill="#0f4f80"/><path d="M9 9 H15 V14 H9 V12.5 H13 V10.5 H9 Z" fill="#0f4f80"/></svg>
<div class="t" style="left:481.30px;top:629.57px;font-size:13.5px;line-height:13.5px;color:#111;transform:scaleX(1.0636);transform-origin:0 0;">Baustelleneinrichtung</div>
<div class="r" style="left:727px;top:616px;width:199px;height:41px;overflow:hidden;">
<div class="t" style="left:4.10px;top:13.57px;font-size:13.5px;line-height:13.5px;color:#111;transform:scaleX(1.0347);transform-origin:0 0;">Baustellensicherung</div>
</div>
<div class="r" style="left:365px;top:699px;width:561px;height:1px;background:#d9d9d9;"></div>
<div class="t" style="left:383.50px;top:671.57px;font-size:13.5px;line-height:13.5px;color:#1a1a1a;transform:scaleX(1.0600);transform-origin:0 0;">10</div>
<svg class="r" style="left:421px;top:672px" width="16" height="12" viewBox="0 0 16 12"><path d="M0 3.5 H8 V0 L15 6 L8 12 V8.5 H0 Z" fill="#0f4f80"/></svg>
<svg class="r" style="left:441px;top:671px" width="14" height="14" viewBox="0 0 14 14"><path d="M1.5 1.5 H11.5 V8.5 L8.5 11.5 H1.5 Z" fill="#fff" stroke="#d4d4d4" stroke-width="1"/><path d="M8.5 11.5 V8.5 H11.5" fill="none" stroke="#d4d4d4"/><path d="M2 13 H10" stroke="#e4e4e4" stroke-width="1"/></svg>
<svg class="r" style="left:459px;top:670px" width="16" height="16" viewBox="0 0 16 16" shape-rendering="crispEdges"><path d="M5 3 H8 V0.5 L11.5 4 L8 7.5 V5 H5 Z" fill="#0f4f80"/><rect x="1" y="9" width="7" height="5" fill="#0f4f80"/><path d="M9 9 H15 V14 H9 V12.5 H13 V10.5 H9 Z" fill="#0f4f80"/></svg>
<div class="t" style="left:481.30px;top:671.57px;font-size:13.5px;line-height:13.5px;color:#111;transform:scaleX(1.0636);transform-origin:0 0;">Baustelleneinrichtung</div>
<div class="r" style="left:727px;top:658px;width:199px;height:41px;overflow:hidden;">
<div class="t" style="left:4.10px;top:13.57px;font-size:13.5px;line-height:13.5px;color:#111;transform:scaleX(1.0439);transform-origin:0 0;">Sozialeinrichtungen</div>
</div>
<div class="r" style="left:365px;top:741px;width:561px;height:1px;background:#d9d9d9;"></div>
<div class="t" style="left:383.50px;top:713.57px;font-size:13.5px;line-height:13.5px;color:#1a1a1a;transform:scaleX(1.0600);transform-origin:0 0;">11</div>
<svg class="r" style="left:421px;top:714px" width="16" height="12" viewBox="0 0 16 12"><path d="M0 3.5 H8 V0 L15 6 L8 12 V8.5 H0 Z" fill="#0f4f80"/></svg>
<svg class="r" style="left:441px;top:713px" width="14" height="14" viewBox="0 0 14 14"><path d="M1.5 1.5 H11.5 V8.5 L8.5 11.5 H1.5 Z" fill="#fff" stroke="#d4d4d4" stroke-width="1"/><path d="M8.5 11.5 V8.5 H11.5" fill="none" stroke="#d4d4d4"/><path d="M2 13 H10" stroke="#e4e4e4" stroke-width="1"/></svg>
<svg class="r" style="left:459px;top:712px" width="16" height="16" viewBox="0 0 16 16" shape-rendering="crispEdges"><path d="M5 3 H8 V0.5 L11.5 4 L8 7.5 V5 H5 Z" fill="#0f4f80"/><rect x="1" y="9" width="7" height="5" fill="#0f4f80"/><path d="M9 9 H15 V14 H9 V12.5 H13 V10.5 H9 Z" fill="#0f4f80"/></svg>
<div class="t" style="left:481.30px;top:713.57px;font-size:13.5px;line-height:13.5px;color:#111;transform:scaleX(1.0636);transform-origin:0 0;">Baustelleneinrichtung</div>
<div class="r" style="left:727px;top:700px;width:199px;height:41px;overflow:hidden;">
<div class="t" style="left:4.10px;top:13.57px;font-size:13.5px;line-height:13.5px;color:#111;transform:scaleX(1.0445);transform-origin:0 0;">Erste Hilfe, Notfallvorsorge</div>
</div>
<div class="r" style="left:365px;top:765px;width:561px;height:1px;background:#d9d9d9;"></div>
<div class="t" style="left:374.00px;top:747.57px;font-size:13.5px;line-height:13.5px;color:#1a1a1a;transform:scaleX(1.0300);transform-origin:0 0;">12</div>
<svg class="r" style="left:405px;top:748px" width="12" height="12" viewBox="0 0 12 12" shape-rendering="crispEdges"><rect x="0.6" y="0.6" width="10" height="10" fill="#fff" stroke="#111" stroke-width="1.2"/><rect x="2.5" y="5" width="6.5" height="1.3" fill="#111"/></svg>
<svg class="r" style="left:441px;top:747px" width="14" height="14" viewBox="0 0 14 14"><path d="M1.5 1.5 H11.5 V8.5 L8.5 11.5 H1.5 Z" fill="#fff" stroke="#d4d4d4" stroke-width="1"/><path d="M8.5 11.5 V8.5 H11.5" fill="none" stroke="#d4d4d4"/><path d="M2 13 H10" stroke="#e4e4e4" stroke-width="1"/></svg>
<svg class="r" style="left:459px;top:746px" width="16" height="16" viewBox="0 0 16 16" shape-rendering="crispEdges"><path d="M5 3 H8 V0.5 L11.5 4 L8 7.5 V5 H5 Z" fill="#0f4f80"/><rect x="1" y="9" width="7" height="5" fill="#0f4f80"/><path d="M9 9 H15 V14 H9 V12.5 H13 V10.5 H9 Z" fill="#0f4f80"/></svg>
<div class="t" style="left:481.30px;top:747.57px;font-size:13.5px;line-height:13.5px;color:#111;font-weight:bold;transform:scaleX(0.9744);transform-origin:0 0;">Erdarbeiten</div>
<div class="r" style="left:365px;top:843px;width:561px;height:1px;background:#d9d9d9;"></div>
<div class="t" style="left:383.50px;top:797.57px;font-size:13.5px;line-height:13.5px;color:#1a1a1a;transform:scaleX(1.0600);transform-origin:0 0;">13</div>
<svg class="r" style="left:421px;top:798px" width="16" height="12" viewBox="0 0 16 12"><path d="M0 3.5 H8 V0 L15 6 L8 12 V8.5 H0 Z" fill="#0f4f80"/></svg>
<svg class="r" style="left:441px;top:797px" width="14" height="14" viewBox="0 0 14 14"><path d="M1.5 1.5 H11.5 V8.5 L8.5 11.5 H1.5 Z" fill="#fff" stroke="#d4d4d4" stroke-width="1"/><path d="M8.5 11.5 V8.5 H11.5" fill="none" stroke="#d4d4d4"/><path d="M2 13 H10" stroke="#e4e4e4" stroke-width="1"/></svg>
<svg class="r" style="left:459px;top:796px" width="16" height="16" viewBox="0 0 16 16" shape-rendering="crispEdges"><path d="M5 3 H8 V0.5 L11.5 4 L8 7.5 V5 H5 Z" fill="#0f4f80"/><rect x="1" y="9" width="7" height="5" fill="#0f4f80"/><path d="M9 9 H15 V14 H9 V12.5 H13 V10.5 H9 Z" fill="#0f4f80"/></svg>
<div class="t" style="left:481.30px;top:797.57px;font-size:13.5px;line-height:13.5px;color:#111;transform:scaleX(1.0474);transform-origin:0 0;">Erdarbeiten</div>
<div class="r" style="left:727px;top:766px;width:199px;height:77px;overflow:hidden;">
<div class="t" style="left:4.10px;top:14.07px;font-size:13.5px;line-height:13.5px;color:#111;transform:scaleX(1.0222);transform-origin:0 0;">Hochgelegene</div>
</div>
<div class="r" style="left:727px;top:766px;width:199px;height:77px;overflow:hidden;">
<div class="t" style="left:4.10px;top:31.87px;font-size:13.5px;line-height:13.5px;color:#111;transform:scaleX(1.0300);transform-origin:0 0;">Arbeitsplätze/Verkehrswege an</div>
</div>
<div class="r" style="left:727px;top:766px;width:199px;height:77px;overflow:hidden;">
<div class="t" style="left:4.10px;top:49.67px;font-size:13.5px;line-height:13.5px;color:#111;transform:scaleX(1.0128);transform-origin:0 0;">Baugruben</div>
</div>
<div class="r" style="left:365px;top:885px;width:561px;height:1px;background:#d9d9d9;"></div>
<div class="t" style="left:383.50px;top:857.57px;font-size:13.5px;line-height:13.5px;color:#1a1a1a;transform:scaleX(1.0600);transform-origin:0 0;">14</div>
<svg class="r" style="left:421px;top:858px" width="16" height="12" viewBox="0 0 16 12"><path d="M0 3.5 H8 V0 L15 6 L8 12 V8.5 H0 Z" fill="#0f4f80"/></svg>
<svg class="r" style="left:441px;top:857px" width="14" height="14" viewBox="0 0 14 14"><path d="M1.5 1.5 H11.5 V8.5 L8.5 11.5 H1.5 Z" fill="#fff" stroke="#d4d4d4" stroke-width="1"/><path d="M8.5 11.5 V8.5 H11.5" fill="none" stroke="#d4d4d4"/><path d="M2 13 H10" stroke="#e4e4e4" stroke-width="1"/></svg>
<svg class="r" style="left:459px;top:856px" width="16" height="16" viewBox="0 0 16 16" shape-rendering="crispEdges"><path d="M5 3 H8 V0.5 L11.5 4 L8 7.5 V5 H5 Z" fill="#0f4f80"/><rect x="1" y="9" width="7" height="5" fill="#0f4f80"/><path d="M9 9 H15 V14 H9 V12.5 H13 V10.5 H9 Z" fill="#0f4f80"/></svg>
<div class="t" style="left:481.30px;top:857.57px;font-size:13.5px;line-height:13.5px;color:#111;transform:scaleX(1.0474);transform-origin:0 0;">Erdarbeiten</div>
<div class="r" style="left:727px;top:844px;width:199px;height:41px;overflow:hidden;">
<div class="t" style="left:4.10px;top:13.57px;font-size:13.5px;line-height:13.5px;color:#111;">Zugang in die Baugrube</div>
</div>
<div class="r" style="left:365px;top:927px;width:561px;height:1px;background:#d9d9d9;"></div>
<div class="t" style="left:374.00px;top:899.57px;font-size:13.5px;line-height:13.5px;color:#1a1a1a;transform:scaleX(1.0300);transform-origin:0 0;">15</div>
<svg class="r" style="left:405px;top:900px" width="12" height="12" viewBox="0 0 12 12" shape-rendering="crispEdges"><rect x="0.6" y="0.6" width="10" height="10" fill="#fff" stroke="#111" stroke-width="1.2"/><rect x="2.5" y="5" width="6.5" height="1.3" fill="#111"/></svg>
<svg class="r" style="left:441px;top:899px" width="14" height="14" viewBox="0 0 14 14"><path d="M1.5 1.5 H11.5 V8.5 L8.5 11.5 H1.5 Z" fill="#fff" stroke="#d4d4d4" stroke-width="1"/><path d="M8.5 11.5 V8.5 H11.5" fill="none" stroke="#d4d4d4"/><path d="M2 13 H10" stroke="#e4e4e4" stroke-width="1"/></svg>
<svg class="r" style="left:459px;top:898px" width="16" height="16" viewBox="0 0 16 16" shape-rendering="crispEdges"><path d="M5 3 H8 V0.5 L11.5 4 L8 7.5 V5 H5 Z" fill="#0f4f80"/><rect x="1" y="9" width="7" height="5" fill="#0f4f80"/><path d="M9 9 H15 V14 H9 V12.5 H13 V10.5 H9 Z" fill="#0f4f80"/></svg>
<div class="t" style="left:481.30px;top:891.57px;font-size:13.5px;line-height:13.5px;color:#111;font-weight:bold;">Installationsarbeiten, Metallarbeiten,</div>
<div class="t" style="left:481.30px;top:909.17px;font-size:13.5px;line-height:13.5px;color:#111;font-weight:bold;transform:scaleX(0.9700);transform-origin:0 0;">Schlosserarbeiten</div>
<div class="r" style="left:419px;top:548px;width:508px;height:44px;border:2px solid #6e0f2f;"></div>
<div class="r" style="left:365px;top:945px;width:562px;height:18px;background:#ececec;box-shadow:inset 0 0 0 1px #a8a8a8;"></div>
<div class="r" style="left:365px;top:945px;width:18px;height:18px;background:#f0f0f0;box-shadow:inset 0 0 0 1px #a8a8a8;"></div>
<svg class="r" style="left:369px;top:948px" width="10" height="12" viewBox="0 0 10 12"><path d="M8 1 V11 L2 6 Z" fill="#a0a0a0"/></svg>
<div class="r" style="left:382px;top:945px;width:39px;height:18px;background:#ffffff;box-shadow:inset 0 0 0 1px #a8a8a8;"></div>
<div class="r" style="left:908px;top:945px;width:19px;height:18px;background:#f0f0f0;box-shadow:inset 0 0 0 1px #a8a8a8;"></div>
<svg class="r" style="left:912px;top:948px" width="10" height="12" viewBox="0 0 10 12"><path d="M2 1 V11 L8 6 Z" fill="#a0a0a0"/></svg>
<div class="r" style="left:930px;top:550px;width:4px;height:42px;background:repeating-linear-gradient(#b8b8b8 0 3px,transparent 3px 7px);"></div>
<div class="r" style="left:936px;top:203px;width:810px;height:1px;background:#d4d4d4;"></div>
<div class="r" style="left:936px;top:223px;width:810px;height:1px;background:#d4d4d4;"></div>
<div class="r" style="left:936px;top:243px;width:810px;height:1px;background:#c8c8c8;"></div>
<div class="r" style="left:1626px;top:183px;width:1px;height:20px;background:#d4d4d4;"></div>
<div class="r" style="left:1086px;top:204px;width:1px;height:19px;background:#d4d4d4;"></div>
<div class="r" style="left:1296px;top:204px;width:1px;height:19px;background:#d4d4d4;"></div>
<div class="r" style="left:1506px;top:204px;width:1px;height:19px;background:#d4d4d4;"></div>
<div class="r" style="left:1716px;top:204px;width:1px;height:19px;background:#d4d4d4;"></div>
<div class="t" style="left:1150.70px;top:186.42px;font-size:12.5px;line-height:12.5px;color:#1a1a1a;">Apr 2020</div>
<div class="t" style="left:1684.60px;top:186.13px;font-size:12.6px;line-height:12.6px;color:#1a1a1a;">Mai 2020</div>
<svg class="r" style="left:1740px;top:187px" width="5" height="7" viewBox="0 0 5 7"><path d="M0 0 L5 3.5 L0 7 Z" fill="#000"/></svg>
<div class="t" style="left:961.00px;top:206.54px;font-size:12px;line-height:12px;color:#1a1a1a;transform:scaleX(1.0166);transform-origin:0 0;">15. KW</div>
<div class="t" style="left:1171.00px;top:206.54px;font-size:12px;line-height:12px;color:#1a1a1a;transform:scaleX(1.0166);transform-origin:0 0;">16. KW</div>
<div class="t" style="left:1381.00px;top:206.54px;font-size:12px;line-height:12px;color:#1a1a1a;transform:scaleX(1.0166);transform-origin:0 0;">17. KW</div>
<div class="t" style="left:1591.00px;top:206.54px;font-size:12px;line-height:12px;color:#1a1a1a;transform:scaleX(1.0166);transform-origin:0 0;">18. KW</div>
<div class="r" style="left:1716px;top:204px;width:30px;height:19px;overflow:hidden;">
<div class="t" style="left:3.50px;top:2.54px;font-size:12px;line-height:12px;color:#1a1a1a;">19. KW</div>
</div>
<div class="r" style="left:936px;top:224px;width:810px;height:721px;overflow:hidden;">
<div class="r" style="left:0px;top:326px;width:810px;height:42px;background:#e8e8e8;"></div>
<div class="r" style="left:60px;top:20px;width:30px;height:701px;background:#ffb0b0;"></div>
<div class="r" style="left:90px;top:20px;width:30px;height:701px;background:#ffff80;"></div>
<div class="r" style="left:120px;top:20px;width:30px;height:701px;background:#ffb0b0;"></div>
<div class="r" style="left:150px;top:20px;width:30px;height:701px;background:#ffb0b0;"></div>
<div class="r" style="left:180px;top:20px;width:30px;height:701px;background:#d0d0d0;"></div>
<div class="r" style="left:210px;top:20px;width:30px;height:701px;background:#d0d0d0;"></div>
<div class="r" style="left:240px;top:20px;width:30px;height:701px;background:#d0d0d0;"></div>
<div class="r" style="left:270px;top:20px;width:30px;height:701px;background:#d0d0d0;"></div>
<div class="r" style="left:300px;top:20px;width:30px;height:701px;background:#ffff80;"></div>
<div class="r" style="left:330px;top:20px;width:30px;height:701px;background:#ffff80;"></div>
<div class="r" style="left:510px;top:20px;width:30px;height:701px;background:#ffff80;"></div>
<div class="r" style="left:540px;top:20px;width:30px;height:701px;background:#ffff80;"></div>
<div class="r" style="left:690px;top:20px;width:30px;height:701px;background:#ffb0b0;"></div>
<div class="r" style="left:720px;top:20px;width:30px;height:701px;background:#ffff80;"></div>
<div class="r" style="left:750px;top:20px;width:30px;height:701px;background:#ffff80;"></div>
<div class="t" style="left:12.16px;top:3.24px;font-size:12px;line-height:12px;color:#1a1a1a;">8</div>
<div class="t" style="left:42.16px;top:3.24px;font-size:12px;line-height:12px;color:#1a1a1a;">9</div>
<div class="t" style="left:68.83px;top:3.24px;font-size:12px;line-height:12px;color:#1a1a1a;">10</div>
<div class="t" style="left:99.27px;top:3.24px;font-size:12px;line-height:12px;color:#1a1a1a;">11</div>
<div class="t" style="left:128.83px;top:3.24px;font-size:12px;line-height:12px;color:#1a1a1a;">12</div>
<div class="t" style="left:158.83px;top:3.24px;font-size:12px;line-height:12px;color:#1a1a1a;">13</div>
<div class="t" style="left:188.83px;top:3.24px;font-size:12px;line-height:12px;color:#1a1a1a;">14</div>
<div class="t" style="left:218.83px;top:3.24px;font-size:12px;line-height:12px;color:#1a1a1a;">15</div>
<div class="t" style="left:248.83px;top:3.24px;font-size:12px;line-height:12px;color:#1a1a1a;">16</div>
<div class="t" style="left:278.83px;top:3.24px;font-size:12px;line-height:12px;color:#1a1a1a;">17</div>
<div class="t" style="left:308.83px;top:3.24px;font-size:12px;line-height:12px;color:#1a1a1a;">18</div>
<div class="t" style="left:338.83px;top:3.24px;font-size:12px;line-height:12px;color:#1a1a1a;">19</div>
<div class="t" style="left:368.83px;top:3.24px;font-size:12px;line-height:12px;color:#1a1a1a;">20</div>
<div class="t" style="left:398.83px;top:3.24px;font-size:12px;line-height:12px;color:#1a1a1a;">21</div>
<div class="t" style="left:428.83px;top:3.24px;font-size:12px;line-height:12px;color:#1a1a1a;">22</div>
<div class="t" style="left:458.83px;top:3.24px;font-size:12px;line-height:12px;color:#1a1a1a;">23</div>
<div class="t" style="left:488.83px;top:3.24px;font-size:12px;line-height:12px;color:#1a1a1a;">24</div>
<div class="t" style="left:518.83px;top:3.24px;font-size:12px;line-height:12px;color:#1a1a1a;">25</div>
<div class="t" style="left:548.83px;top:3.24px;font-size:12px;line-height:12px;color:#1a1a1a;">26</div>
<div class="t" style="left:578.83px;top:3.24px;font-size:12px;line-height:12px;color:#1a1a1a;">27</div>
<div class="t" style="left:608.83px;top:3.24px;font-size:12px;line-height:12px;color:#1a1a1a;">28</div>
<div class="t" style="left:638.83px;top:3.24px;font-size:12px;line-height:12px;color:#1a1a1a;">29</div>
<div class="t" style="left:668.83px;top:3.24px;font-size:12px;line-height:12px;color:#1a1a1a;">30</div>
<div class="t" style="left:702.16px;top:3.24px;font-size:12px;line-height:12px;color:#1a1a1a;">1</div>
<div class="t" style="left:732.16px;top:3.24px;font-size:12px;line-height:12px;color:#1a1a1a;">2</div>
<div class="t" style="left:762.16px;top:3.24px;font-size:12px;line-height:12px;color:#1a1a1a;">3</div>
<div class="t" style="left:792.16px;top:3.24px;font-size:12px;line-height:12px;color:#1a1a1a;">4</div>
<div class="t" style="left:37.6px;top:365.5px;width:73.7px;font-size:17px;line-height:18px;height:18px;color:#fff;text-align:center;transform:rotate(-90deg) scaleX(0.9);transform-origin:50% 50%;">Karfreitag</div>
<div class="t" style="left:83.5px;top:367.5px;width:102.1px;font-size:17px;line-height:18px;height:18px;color:#fff;text-align:center;transform:rotate(-90deg) scaleX(0.9);transform-origin:50% 50%;">Ostersonntag</div>
<div class="t" style="left:115.4px;top:367.5px;width:98.3px;font-size:17px;line-height:18px;height:18px;color:#fff;text-align:center;transform:rotate(-90deg) scaleX(0.9);transform-origin:50% 50%;">Ostermontag</div>
<div class="t" style="left:152.5px;top:367.0px;width:84.1px;font-size:17px;line-height:18px;height:18px;color:#fff;text-align:center;transform:rotate(-90deg) scaleX(0.9);transform-origin:50% 50%;">Osterferien</div>
<div class="t" style="left:182.5px;top:367.0px;width:84.1px;font-size:17px;line-height:18px;height:18px;color:#fff;text-align:center;transform:rotate(-90deg) scaleX(0.9);transform-origin:50% 50%;">Osterferien</div>
<div class="t" style="left:212.5px;top:367.0px;width:84.1px;font-size:17px;line-height:18px;height:18px;color:#fff;text-align:center;transform:rotate(-90deg) scaleX(0.9);transform-origin:50% 50%;">Osterferien</div>
<div class="t" style="left:242.5px;top:367.0px;width:84.1px;font-size:17px;line-height:18px;height:18px;color:#fff;text-align:center;transform:rotate(-90deg) scaleX(0.9);transform-origin:50% 50%;">Osterferien</div>
<div class="t" style="left:681.4px;top:369.0px;width:46.3px;font-size:17px;line-height:18px;height:18px;color:#fff;text-align:center;transform:rotate(-90deg) scaleX(0.9);transform-origin:50% 50%;">1. Mai</div>
<div class="r" style="left:30px;top:0px;width:1px;height:721px;background:#d9d9d9;"></div>
<div class="r" style="left:60px;top:0px;width:1px;height:721px;background:#d9d9d9;"></div>
<div class="r" style="left:90px;top:0px;width:1px;height:721px;background:#d9d9d9;"></div>
<div class="r" style="left:120px;top:0px;width:1px;height:721px;background:#d9d9d9;"></div>
<div class="r" style="left:150px;top:0px;width:1px;height:721px;background:#d9d9d9;"></div>
<div class="r" style="left:180px;top:0px;width:1px;height:721px;background:#d9d9d9;"></div>
<div class="r" style="left:210px;top:0px;width:1px;height:721px;background:#d9d9d9;"></div>
<div class="r" style="left:240px;top:0px;width:1px;height:721px;background:#d9d9d9;"></div>
<div class="r" style="left:270px;top:0px;width:1px;height:721px;background:#d9d9d9;"></div>
<div class="r" style="left:300px;top:0px;width:1px;height:721px;background:#d9d9d9;"></div>
<div class="r" style="left:330px;top:0px;width:1px;height:721px;background:#d9d9d9;"></div>
<div class="r" style="left:360px;top:0px;width:1px;height:721px;background:#d9d9d9;"></div>
<div class="r" style="left:390px;top:0px;width:1px;height:721px;background:#d9d9d9;"></div>
<div class="r" style="left:420px;top:0px;width:1px;height:721px;background:#d9d9d9;"></div>
<div class="r" style="left:450px;top:0px;width:1px;height:721px;background:#d9d9d9;"></div>
<div class="r" style="left:480px;top:0px;width:1px;height:721px;background:#d9d9d9;"></div>
<div class="r" style="left:510px;top:0px;width:1px;height:721px;background:#d9d9d9;"></div>
<div class="r" style="left:540px;top:0px;width:1px;height:721px;background:#d9d9d9;"></div>
<div class="r" style="left:570px;top:0px;width:1px;height:721px;background:#d9d9d9;"></div>
<div class="r" style="left:600px;top:0px;width:1px;height:721px;background:#d9d9d9;"></div>
<div class="r" style="left:630px;top:0px;width:1px;height:721px;background:#d9d9d9;"></div>
<div class="r" style="left:660px;top:0px;width:1px;height:721px;background:#d9d9d9;"></div>
<div class="r" style="left:690px;top:0px;width:1px;height:721px;background:#d9d9d9;"></div>
<div class="r" style="left:720px;top:0px;width:1px;height:721px;background:#d9d9d9;"></div>
<div class="r" style="left:750px;top:0px;width:1px;height:721px;background:#d9d9d9;"></div>
<div class="r" style="left:780px;top:0px;width:1px;height:721px;background:#d9d9d9;"></div>
<div class="r" style="left:810px;top:0px;width:1px;height:721px;background:#d9d9d9;"></div>
<div class="r" style="left:0px;top:43px;width:810px;height:1px;background:#d9d9d9;"></div>
<div class="r" style="left:0px;top:85px;width:810px;height:1px;background:#d9d9d9;"></div>
<div class="r" style="left:0px;top:145px;width:810px;height:1px;background:#d9d9d9;"></div>
<div class="r" style="left:0px;top:259px;width:810px;height:1px;background:#d9d9d9;"></div>
<div class="r" style="left:0px;top:301px;width:810px;height:1px;background:#d9d9d9;"></div>
<div class="r" style="left:0px;top:325px;width:810px;height:1px;background:#d9d9d9;"></div>
<div class="r" style="left:0px;top:367px;width:810px;height:1px;background:#d9d9d9;"></div>
<div class="r" style="left:0px;top:391px;width:810px;height:1px;background:#d9d9d9;"></div>
<div class="r" style="left:0px;top:433px;width:810px;height:1px;background:#d9d9d9;"></div>
<div class="r" style="left:0px;top:475px;width:810px;height:1px;background:#d9d9d9;"></div>
<div class="r" style="left:0px;top:517px;width:810px;height:1px;background:#d9d9d9;"></div>
<div class="r" style="left:0px;top:541px;width:810px;height:1px;background:#d9d9d9;"></div>
<div class="r" style="left:0px;top:619px;width:810px;height:1px;background:#d9d9d9;"></div>
<div class="r" style="left:0px;top:661px;width:810px;height:1px;background:#d9d9d9;"></div>
<div class="r" style="left:0px;top:703px;width:810px;height:1px;background:#d9d9d9;"></div>
<div class="r" style="left:0px;top:21px;width:361px;height:6px;background:#000;"></div>
<svg class="r" style="left:356px;top:27px" width="5" height="5" viewBox="0 0 5 5"><path d="M0 0 H5 V5 Z" fill="#000"/></svg>
<div class="r" style="left:0px;top:55px;width:30px;height:19px;background:#80ff00;"></div>
<div class="r" style="left:30px;top:55px;width:30px;height:19px;background:#80ff00;"></div>
<div class="r" style="left:60px;top:55px;width:30px;height:19px;background:#dcc488;"></div>
<div class="r" style="left:90px;top:55px;width:30px;height:19px;background:#80ff00;"></div>
<div class="r" style="left:120px;top:55px;width:30px;height:19px;background:#dcc488;"></div>
<div class="r" style="left:150px;top:55px;width:30px;height:19px;background:#dcc488;"></div>
<div class="r" style="left:180px;top:55px;width:30px;height:19px;background:#bedba0;"></div>
<div class="r" style="left:210px;top:55px;width:30px;height:19px;background:#bedba0;"></div>
<div class="r" style="left:240px;top:55px;width:30px;height:19px;background:#bedba0;"></div>
<div class="r" style="left:270px;top:55px;width:30px;height:19px;background:#bedba0;"></div>
<div class="r" style="left:300px;top:55px;width:30px;height:19px;background:#80ff00;"></div>
<div class="r" style="left:330px;top:55px;width:30px;height:19px;background:#80ff00;"></div>
<div class="r" style="left:360px;top:55px;width:1px;height:19px;background:#80ff00;"></div>
<div class="r" style="left:0px;top:55px;width:361px;height:19px;border:1px solid #000;"></div>
<div class="r" style="left:0px;top:105px;width:30px;height:19px;background:#80ff00;"></div>
<div class="r" style="left:30px;top:105px;width:30px;height:19px;background:#80ff00;"></div>
<div class="r" style="left:60px;top:105px;width:30px;height:19px;background:#dcc488;"></div>
<div class="r" style="left:90px;top:105px;width:30px;height:19px;background:#80ff00;"></div>
<div class="r" style="left:120px;top:105px;width:30px;height:19px;background:#dcc488;"></div>
<div class="r" style="left:150px;top:105px;width:30px;height:19px;background:#dcc488;"></div>
<div class="r" style="left:180px;top:105px;width:30px;height:19px;background:#bedba0;"></div>
<div class="r" style="left:210px;top:105px;width:30px;height:19px;background:#bedba0;"></div>
<div class="r" style="left:240px;top:105px;width:30px;height:19px;background:#bedba0;"></div>
<div class="r" style="left:270px;top:105px;width:30px;height:19px;background:#bedba0;"></div>
<div class="r" style="left:300px;top:105px;width:30px;height:19px;background:#80ff00;"></div>
<div class="r" style="left:330px;top:105px;width:30px;height:19px;background:#80ff00;"></div>
<div class="r" style="left:360px;top:105px;width:1px;height:19px;background:#80ff00;"></div>
<div class="r" style="left:0px;top:105px;width:361px;height:19px;border:2px solid #f0a080;"></div>
<div class="r" style="left:0px;top:193px;width:30px;height:19px;background:#80ff00;"></div>
<div class="r" style="left:30px;top:193px;width:30px;height:19px;background:#80ff00;"></div>
<div class="r" style="left:60px;top:193px;width:30px;height:19px;background:#dcc488;"></div>
<div class="r" style="left:90px;top:193px;width:30px;height:19px;background:#80ff00;"></div>
<div class="r" style="left:120px;top:193px;width:30px;height:19px;background:#dcc488;"></div>
<div class="r" style="left:150px;top:193px;width:30px;height:19px;background:#dcc488;"></div>
<div class="r" style="left:180px;top:193px;width:30px;height:19px;background:#bedba0;"></div>
<div class="r" style="left:210px;top:193px;width:30px;height:19px;background:#bedba0;"></div>
<div class="r" style="left:240px;top:193px;width:30px;height:19px;background:#bedba0;"></div>
<div class="r" style="left:270px;top:193px;width:30px;height:19px;background:#bedba0;"></div>
<div class="r" style="left:300px;top:193px;width:30px;height:19px;background:#80ff00;"></div>
<div class="r" style="left:330px;top:193px;width:30px;height:19px;background:#80ff00;"></div>
<div class="r" style="left:360px;top:193px;width:1px;height:19px;background:#80ff00;"></div>
<div class="r" style="left:0px;top:193px;width:361px;height:19px;border:1px solid #000;"></div>
<div class="r" style="left:0px;top:271px;width:30px;height:19px;background:#80ff00;"></div>
<div class="r" style="left:30px;top:271px;width:30px;height:19px;background:#80ff00;"></div>
<div class="r" style="left:60px;top:271px;width:30px;height:19px;background:#dcc488;"></div>
<div class="r" style="left:90px;top:271px;width:30px;height:19px;background:#80ff00;"></div>
<div class="r" style="left:120px;top:271px;width:30px;height:19px;background:#dcc488;"></div>
<div class="r" style="left:150px;top:271px;width:30px;height:19px;background:#dcc488;"></div>
<div class="r" style="left:180px;top:271px;width:30px;height:19px;background:#bedba0;"></div>
<div class="r" style="left:210px;top:271px;width:30px;height:19px;background:#bedba0;"></div>
<div class="r" style="left:240px;top:271px;width:30px;height:19px;background:#bedba0;"></div>
<div class="r" style="left:270px;top:271px;width:30px;height:19px;background:#bedba0;"></div>
<div class="r" style="left:300px;top:271px;width:30px;height:19px;background:#80ff00;"></div>
<div class="r" style="left:330px;top:271px;width:30px;height:19px;background:#80ff00;"></div>
<div class="r" style="left:360px;top:271px;width:1px;height:19px;background:#80ff00;"></div>
<div class="r" style="left:0px;top:271px;width:361px;height:19px;border:1px solid #000;"></div>
<div class="r" style="left:0px;top:303px;width:810px;height:6px;background:#000;"></div>
<svg class="r" style="left:0px;top:309px" width="8" height="5" viewBox="0 0 8 5"><path d="M0 0 H8 L0 5 Z" fill="#000"/></svg>
<div class="r" style="left:0px;top:337px;width:30px;height:19px;background:#003f80;"></div>
<div class="r" style="left:30px;top:337px;width:30px;height:19px;background:#003f80;"></div>
<div class="r" style="left:60px;top:337px;width:30px;height:19px;background:#bd93a3;"></div>
<div class="r" style="left:90px;top:337px;width:30px;height:19px;background:#003f80;"></div>
<div class="r" style="left:120px;top:337px;width:30px;height:19px;background:#bd93a3;"></div>
<div class="r" style="left:150px;top:337px;width:30px;height:19px;background:#bd93a3;"></div>
<div class="r" style="left:180px;top:337px;width:30px;height:19px;background:#9aaabb;"></div>
<div class="r" style="left:210px;top:337px;width:30px;height:19px;background:#9aaabb;"></div>
<div class="r" style="left:240px;top:337px;width:30px;height:19px;background:#9aaabb;"></div>
<div class="r" style="left:270px;top:337px;width:30px;height:19px;background:#9aaabb;"></div>
<div class="r" style="left:300px;top:337px;width:30px;height:19px;background:#003f80;"></div>
<div class="r" style="left:330px;top:337px;width:30px;height:19px;background:#003f80;"></div>
<div class="r" style="left:360px;top:337px;width:30px;height:19px;background:#003f80;"></div>
<div class="r" style="left:390px;top:337px;width:30px;height:19px;background:#003f80;"></div>
<div class="r" style="left:420px;top:337px;width:30px;height:19px;background:#003f80;"></div>
<div class="r" style="left:450px;top:337px;width:30px;height:19px;background:#003f80;"></div>
<div class="r" style="left:480px;top:337px;width:30px;height:19px;background:#003f80;"></div>
<div class="r" style="left:510px;top:337px;width:30px;height:19px;background:#003f80;"></div>
<div class="r" style="left:540px;top:337px;width:30px;height:19px;background:#003f80;"></div>
<div class="r" style="left:570px;top:337px;width:30px;height:19px;background:#003f80;"></div>
<div class="r" style="left:600px;top:337px;width:30px;height:19px;background:#003f80;"></div>
<div class="r" style="left:630px;top:337px;width:30px;height:19px;background:#003f80;"></div>
<div class="r" style="left:660px;top:337px;width:30px;height:19px;background:#003f80;"></div>
<div class="r" style="left:690px;top:337px;width:30px;height:19px;background:#bd93a3;"></div>
<div class="r" style="left:720px;top:337px;width:30px;height:19px;background:#003f80;"></div>
<div class="r" style="left:750px;top:337px;width:30px;height:19px;background:#003f80;"></div>
<div class="r" style="left:780px;top:337px;width:30px;height:19px;background:#003f80;"></div>
<div class="r" style="left:0px;top:337px;width:814px;height:19px;border:2px solid #f0a888;"></div>
<div class="r" style="left:0px;top:370px;width:30px;height:19px;background:#003f80;"></div>
<div class="r" style="left:30px;top:370px;width:30px;height:19px;background:#003f80;"></div>
<div class="r" style="left:60px;top:370px;width:30px;height:19px;background:#bd93a3;"></div>
<div class="r" style="left:90px;top:370px;width:30px;height:19px;background:#003f80;"></div>
<div class="r" style="left:120px;top:370px;width:30px;height:19px;background:#bd93a3;"></div>
<div class="r" style="left:150px;top:370px;width:30px;height:19px;background:#bd93a3;"></div>
<div class="r" style="left:180px;top:370px;width:30px;height:19px;background:#9aaabb;"></div>
<div class="r" style="left:210px;top:370px;width:30px;height:19px;background:#9aaabb;"></div>
<div class="r" style="left:240px;top:370px;width:30px;height:19px;background:#9aaabb;"></div>
<div class="r" style="left:270px;top:370px;width:30px;height:19px;background:#9aaabb;"></div>
<div class="r" style="left:300px;top:370px;width:30px;height:19px;background:#003f80;"></div>
<div class="r" style="left:330px;top:370px;width:30px;height:19px;background:#003f80;"></div>
<div class="r" style="left:360px;top:370px;width:30px;height:19px;background:#003f80;"></div>
<div class="r" style="left:390px;top:370px;width:30px;height:19px;background:#003f80;"></div>
<div class="r" style="left:420px;top:370px;width:30px;height:19px;background:#003f80;"></div>
<div class="r" style="left:450px;top:370px;width:30px;height:19px;background:#003f80;"></div>
<div class="r" style="left:480px;top:370px;width:30px;height:19px;background:#003f80;"></div>
<div class="r" style="left:510px;top:370px;width:30px;height:19px;background:#003f80;"></div>
<div class="r" style="left:540px;top:370px;width:30px;height:19px;background:#003f80;"></div>
<div class="r" style="left:570px;top:370px;width:30px;height:19px;background:#003f80;"></div>
<div class="r" style="left:600px;top:370px;width:30px;height:19px;background:#003f80;"></div>
<div class="r" style="left:630px;top:370px;width:30px;height:19px;background:#003f80;"></div>
<div class="r" style="left:660px;top:370px;width:30px;height:19px;background:#003f80;"></div>
<div class="r" style="left:690px;top:370px;width:30px;height:19px;background:#bd93a3;"></div>
<div class="r" style="left:720px;top:370px;width:30px;height:19px;background:#003f80;"></div>
<div class="r" style="left:750px;top:370px;width:30px;height:19px;background:#003f80;"></div>
<div class="r" style="left:780px;top:370px;width:30px;height:19px;background:#003f80;"></div>
<div class="r" style="left:0px;top:370px;width:814px;height:19px;border:1px solid #000;"></div>
<div class="r" style="left:0px;top:403px;width:30px;height:19px;background:#003f80;"></div>
<div class="r" style="left:30px;top:403px;width:30px;height:19px;background:#003f80;"></div>
<div class="r" style="left:60px;top:403px;width:30px;height:19px;background:#bd93a3;"></div>
<div class="r" style="left:90px;top:403px;width:30px;height:19px;background:#003f80;"></div>
<div class="r" style="left:120px;top:403px;width:30px;height:19px;background:#bd93a3;"></div>
<div class="r" style="left:150px;top:403px;width:30px;height:19px;background:#bd93a3;"></div>
<div class="r" style="left:180px;top:403px;width:30px;height:19px;background:#9aaabb;"></div>
<div class="r" style="left:210px;top:403px;width:30px;height:19px;background:#9aaabb;"></div>
<div class="r" style="left:240px;top:403px;width:30px;height:19px;background:#9aaabb;"></div>
<div class="r" style="left:270px;top:403px;width:30px;height:19px;background:#9aaabb;"></div>
<div class="r" style="left:300px;top:403px;width:30px;height:19px;background:#003f80;"></div>
<div class="r" style="left:330px;top:403px;width:30px;height:19px;background:#003f80;"></div>
<div class="r" style="left:360px;top:403px;width:30px;height:19px;background:#003f80;"></div>
<div class="r" style="left:390px;top:403px;width:30px;height:19px;background:#003f80;"></div>
<div class="r" style="left:420px;top:403px;width:30px;height:19px;background:#003f80;"></div>
<div class="r" style="left:450px;top:403px;width:30px;height:19px;background:#003f80;"></div>
<div class="r" style="left:480px;top:403px;width:30px;height:19px;background:#003f80;"></div>
<div class="r" style="left:510px;top:403px;width:30px;height:19px;background:#003f80;"></div>
<div class="r" style="left:540px;top:403px;width:30px;height:19px;background:#003f80;"></div>
<div class="r" style="left:570px;top:403px;width:30px;height:19px;background:#003f80;"></div>
<div class="r" style="left:600px;top:403px;width:30px;height:19px;background:#003f80;"></div>
<div class="r" style="left:630px;top:403px;width:30px;height:19px;background:#003f80;"></div>
<div class="r" style="left:660px;top:403px;width:30px;height:19px;background:#003f80;"></div>
<div class="r" style="left:690px;top:403px;width:30px;height:19px;background:#bd93a3;"></div>
<div class="r" style="left:720px;top:403px;width:30px;height:19px;background:#003f80;"></div>
<div class="r" style="left:750px;top:403px;width:30px;height:19px;background:#003f80;"></div>
<div class="r" style="left:780px;top:403px;width:30px;height:19px;background:#003f80;"></div>
<div class="r" style="left:0px;top:403px;width:814px;height:19px;border:1px solid #000;"></div>
<div class="r" style="left:0px;top:445px;width:30px;height:19px;background:#003f80;"></div>
<div class="r" style="left:30px;top:445px;width:30px;height:19px;background:#003f80;"></div>
<div class="r" style="left:60px;top:445px;width:30px;height:19px;background:#bd93a3;"></div>
<div class="r" style="left:90px;top:445px;width:30px;height:19px;background:#003f80;"></div>
<div class="r" style="left:120px;top:445px;width:30px;height:19px;background:#bd93a3;"></div>
<div class="r" style="left:150px;top:445px;width:30px;height:19px;background:#bd93a3;"></div>
<div class="r" style="left:180px;top:445px;width:30px;height:19px;background:#9aaabb;"></div>
<div class="r" style="left:210px;top:445px;width:30px;height:19px;background:#9aaabb;"></div>
<div class="r" style="left:240px;top:445px;width:30px;height:19px;background:#9aaabb;"></div>
<div class="r" style="left:270px;top:445px;width:30px;height:19px;background:#9aaabb;"></div>
<div class="r" style="left:300px;top:445px;width:30px;height:19px;background:#003f80;"></div>
<div class="r" style="left:330px;top:445px;width:30px;height:19px;background:#003f80;"></div>
<div class="r" style="left:360px;top:445px;width:30px;height:19px;background:#003f80;"></div>
<div class="r" style="left:390px;top:445px;width:30px;height:19px;background:#003f80;"></div>
<div class="r" style="left:420px;top:445px;width:30px;height:19px;background:#003f80;"></div>
<div class="r" style="left:450px;top:445px;width:30px;height:19px;background:#003f80;"></div>
<div class="r" style="left:480px;top:445px;width:30px;height:19px;background:#003f80;"></div>
<div class="r" style="left:510px;top:445px;width:30px;height:19px;background:#003f80;"></div>
<div class="r" style="left:540px;top:445px;width:30px;height:19px;background:#003f80;"></div>
<div class="r" style="left:570px;top:445px;width:30px;height:19px;background:#003f80;"></div>
<div class="r" style="left:600px;top:445px;width:30px;height:19px;background:#003f80;"></div>
<div class="r" style="left:630px;top:445px;width:30px;height:19px;background:#003f80;"></div>
<div class="r" style="left:660px;top:445px;width:30px;height:19px;background:#003f80;"></div>
<div class="r" style="left:690px;top:445px;width:30px;height:19px;background:#bd93a3;"></div>
<div class="r" style="left:720px;top:445px;width:30px;height:19px;background:#003f80;"></div>
<div class="r" style="left:750px;top:445px;width:30px;height:19px;background:#003f80;"></div>
<div class="r" style="left:780px;top:445px;width:30px;height:19px;background:#003f80;"></div>
<div class="r" style="left:0px;top:445px;width:814px;height:19px;border:1px solid #000;"></div>
<div class="r" style="left:0px;top:487px;width:30px;height:19px;background:#003f80;"></div>
<div class="r" style="left:30px;top:487px;width:30px;height:19px;background:#003f80;"></div>
<div class="r" style="left:60px;top:487px;width:30px;height:19px;background:#bd93a3;"></div>
<div class="r" style="left:90px;top:487px;width:30px;height:19px;background:#003f80;"></div>
<div class="r" style="left:120px;top:487px;width:30px;height:19px;background:#bd93a3;"></div>
<div class="r" style="left:150px;top:487px;width:30px;height:19px;background:#bd93a3;"></div>
<div class="r" style="left:180px;top:487px;width:30px;height:19px;background:#9aaabb;"></div>
<div class="r" style="left:210px;top:487px;width:30px;height:19px;background:#9aaabb;"></div>
<div class="r" style="left:240px;top:487px;width:30px;height:19px;background:#9aaabb;"></div>
<div class="r" style="left:270px;top:487px;width:30px;height:19px;background:#9aaabb;"></div>
<div class="r" style="left:300px;top:487px;width:30px;height:19px;background:#003f80;"></div>
<div class="r" style="left:330px;top:487px;width:30px;height:19px;background:#003f80;"></div>
<div class="r" style="left:360px;top:487px;width:30px;height:19px;background:#003f80;"></div>
<div class="r" style="left:390px;top:487px;width:30px;height:19px;background:#003f80;"></div>
<div class="r" style="left:420px;top:487px;width:30px;height:19px;background:#003f80;"></div>
<div class="r" style="left:450px;top:487px;width:30px;height:19px;background:#003f80;"></div>
<div class="r" style="left:480px;top:487px;width:30px;height:19px;background:#003f80;"></div>
<div class="r" style="left:510px;top:487px;width:30px;height:19px;background:#003f80;"></div>
<div class="r" style="left:540px;top:487px;width:30px;height:19px;background:#003f80;"></div>
<div class="r" style="left:570px;top:487px;width:30px;height:19px;background:#003f80;"></div>
<div class="r" style="left:600px;top:487px;width:30px;height:19px;background:#003f80;"></div>
<div class="r" style="left:630px;top:487px;width:30px;height:19px;background:#003f80;"></div>
<div class="r" style="left:660px;top:487px;width:30px;height:19px;background:#003f80;"></div>
<div class="r" style="left:690px;top:487px;width:30px;height:19px;background:#bd93a3;"></div>
<div class="r" style="left:720px;top:487px;width:30px;height:19px;background:#003f80;"></div>
<div class="r" style="left:750px;top:487px;width:30px;height:19px;background:#003f80;"></div>
<div class="r" style="left:780px;top:487px;width:30px;height:19px;background:#003f80;"></div>
<div class="r" style="left:0px;top:487px;width:814px;height:19px;border:1px solid #000;"></div>
<div class="r" style="left:365px;top:105px;width:20px;height:20px;background:#fff;border:1px solid #f0a888;border-radius:4px;"></div>
<svg class="r" style="left:367px;top:107px" width="16" height="16" viewBox="0 0 16 16"><circle cx="8" cy="8" r="8" fill="#8c8c8c"/><path d="M5 11 L11 5" stroke="#fff" stroke-width="1"/><rect x="3.2" y="8.2" width="5" height="3" rx="1.5" transform="rotate(-45 5.7 9.7)" fill="none" stroke="#fff" stroke-width="1.1"/><rect x="7.8" y="4.8" width="5" height="3" rx="1.5" transform="rotate(-45 10.3 6.3)" fill="none" stroke="#fff" stroke-width="1.1"/></svg>
<div class="r" style="left:0px;top:20px;width:1px;height:701px;background:repeating-linear-gradient(#0d4a8c 0 3px,transparent 3px 5px);"></div>
</div>
<div class="r" style="left:1745px;top:183px;width:1px;height:762px;background:#a0a0a0;"></div>
<div class="r" style="left:1746px;top:183px;width:17px;height:762px;background:#ececec;"></div>
<div class="r" style="left:1746px;top:184px;width:16px;height:16px;background:#f0f0f0;box-shadow:inset 0 0 0 1px #d0d0d0;"></div>
<svg class="r" style="left:1748px;top:186px" width="12" height="10" viewBox="0 0 12 10"><path d="M1 8 L6 2 L11 8 Z" fill="#a8a8a8"/></svg>
<div class="r" style="left:1746px;top:201px;width:16px;height:70px;background:#ffffff;box-shadow:inset 0 0 0 1px #c0c0c0;"></div>
<div class="r" style="left:1746px;top:928px;width:16px;height:17px;background:#f0f0f0;box-shadow:inset 0 0 0 1px #d0d0d0;"></div>
<svg class="r" style="left:1748px;top:932px" width="12" height="10" viewBox="0 0 12 10"><path d="M1 2 L6 8 L11 2 Z" fill="#a8a8a8"/></svg>
<div class="r" style="left:1762px;top:0px;width:2px;height:987px;background:#a0a0a0;"></div>
<div class="r" style="left:936px;top:945px;width:810px;height:18px;background:#ececec;box-shadow:inset 0 0 0 1px #a8a8a8;"></div>
<div class="r" style="left:936px;top:945px;width:19px;height:18px;background:#f0f0f0;box-shadow:inset 0 0 0 1px #a8a8a8;"></div>
<svg class="r" style="left:940px;top:948px" width="10" height="12" viewBox="0 0 10 12"><path d="M8 1 V11 L2 6 Z" fill="#a0a0a0"/></svg>
<div class="r" style="left:1447px;top:945px;width:22px;height:18px;background:#ffffff;box-shadow:inset 0 0 0 1px #a8a8a8;"></div>
<div class="r" style="left:1726px;top:945px;width:19px;height:18px;background:#f0f0f0;box-shadow:inset 0 0 0 1px #a8a8a8;"></div>
<svg class="r" style="left:1731px;top:948px" width="10" height="12" viewBox="0 0 10 12"><path d="M2 1 V11 L8 6 Z" fill="#a0a0a0"/></svg>
<div class="r" style="left:1746px;top:945px;width:17px;height:18px;background:#f0f0f0;"></div>
</body></html>
